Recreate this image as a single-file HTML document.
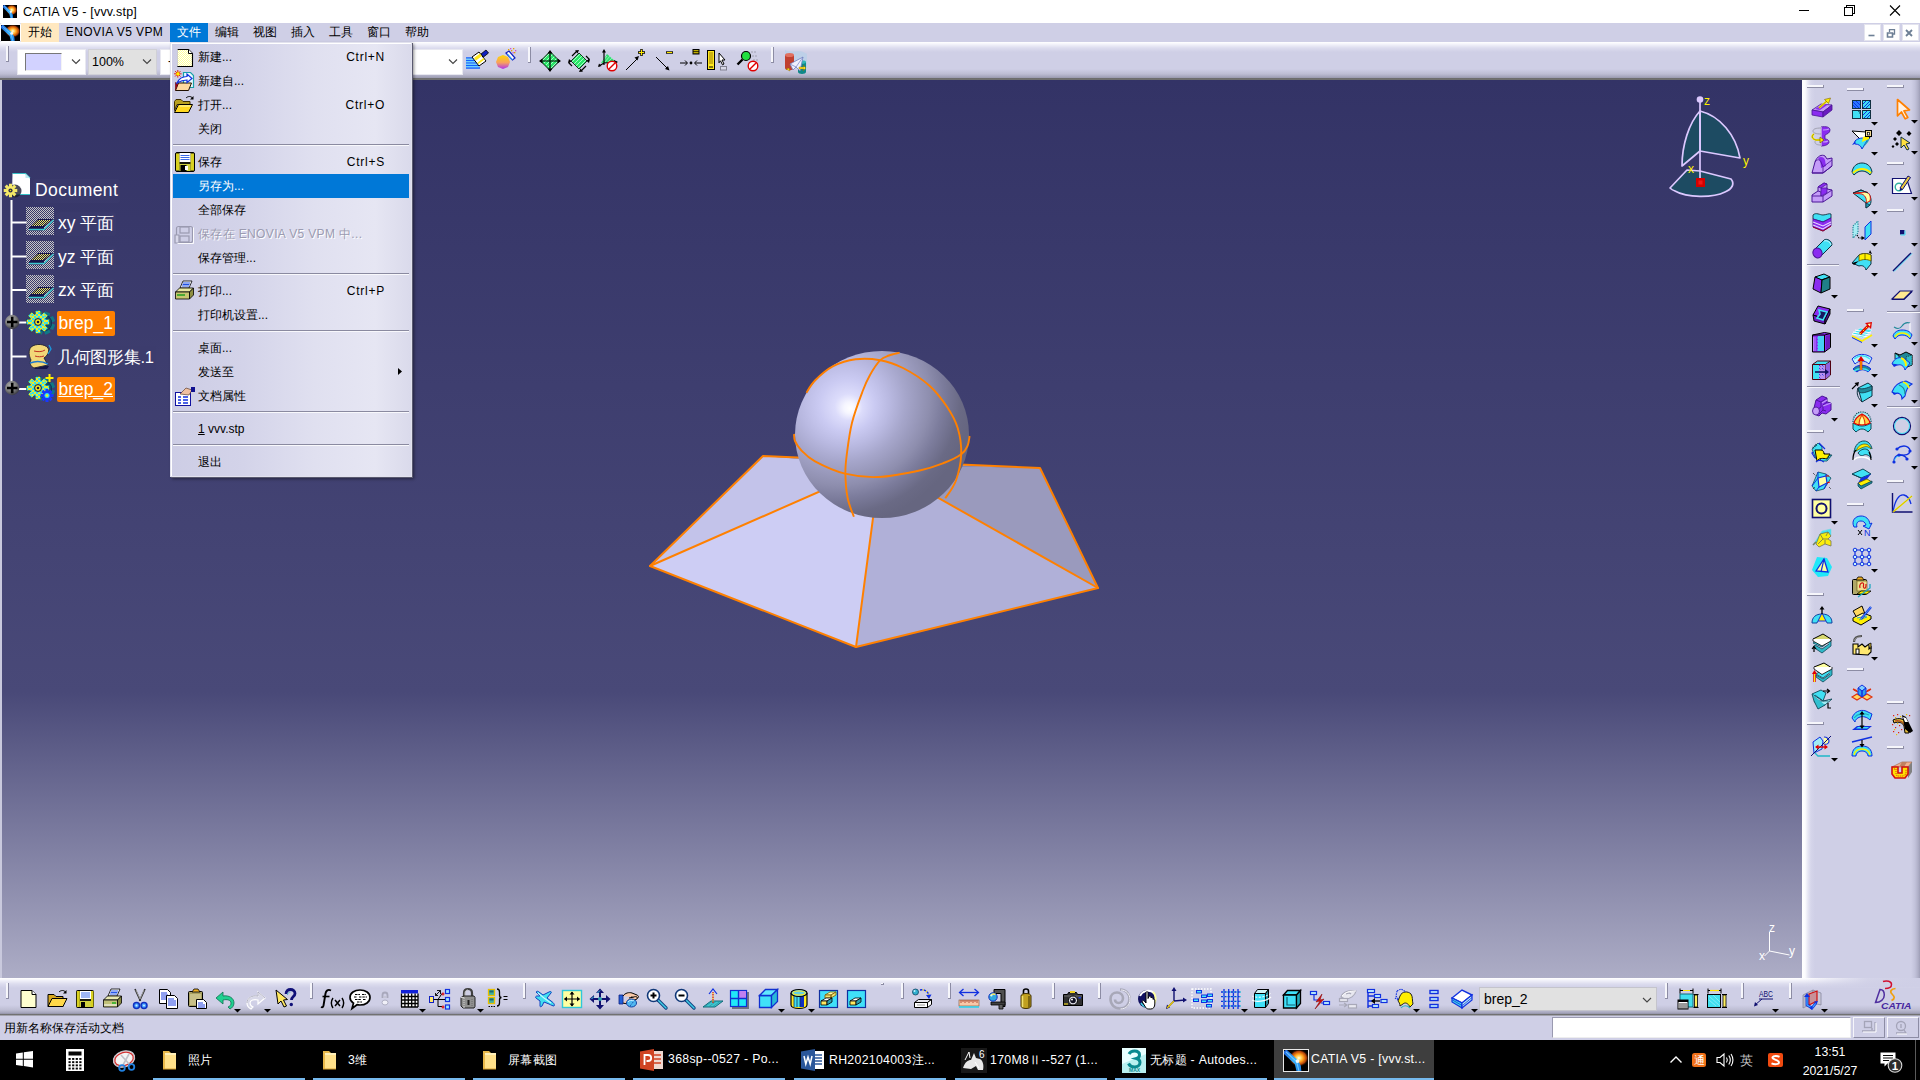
<!DOCTYPE html>
<html lang="zh"><head><meta charset="utf-8"><title>CATIA V5 - [vvv.stp]</title>
<style>
*{box-sizing:border-box;margin:0;padding:0}
html,body{width:1920px;height:1080px;overflow:hidden;background:#fff}
body{font-family:"Liberation Sans",sans-serif;font-size:12px;color:#000;position:relative}
.abs{position:absolute}
#title{left:0;top:0;width:1920px;height:23px;background:#fff}
#title .t{left:23px;top:4.5px;font-size:12.5px;letter-spacing:.2px;white-space:nowrap}
#menubar{left:0;top:23px;width:1920px;height:19px;background:#cfcfe6}
.mi{top:0;height:19px;line-height:19px;font-size:12px;white-space:nowrap;text-align:center}
#tb{left:0;top:42px;width:1920px;height:39px;background:linear-gradient(#fff 0,#f4f4fb 2px,#dcdcee 6px,#cfcfe6 10px,#cfcfe6 27px,#bdbdd3 32px,#a3a3b9 35px,#9a9aae 36px,#6c6c6c 36px,#747474 39px)}
#vp{left:0;top:80px;width:1802px;height:898px;background:linear-gradient(#333366 0,#494978 612px,#adadc6 898px)}
#vpl{left:0;top:80px;width:2px;height:898px;background:#c9c9dd}
#rp{left:1802px;top:80px;width:118px;height:898px;background:linear-gradient(90deg,#fff 0,#fcfcfe 3px,#e6e6f3 6px,#d5d5ea 9px,#cfcfe6 13px,#cfcfe6 109px,#c2c2da 113px,#b0b0c8 116px,#9e9eb6 118px)}
#bb{left:0;top:978px;width:1920px;height:38px;background:linear-gradient(#fff 0,#f4f4fb 2px,#dcdcee 6px,#cfcfe6 10px,#cfcfe6 27px,#bdbdd3 32px,#a3a3b9 35px,#8f8fa3 36px,#6c6c6c 36px,#777 37px,#cfcfe6 38px)}
#sb{left:0;top:1016px;width:1920px;height:24px;background:#cfcfe6}
#sb .t{left:4px;top:3.5px;font-size:12px;white-space:nowrap}
#task{left:0;top:1040px;width:1920px;height:40px;background:#000;color:#fff}
.tk{top:0;height:40px;font-size:12px;white-space:nowrap}
.tk .lb{position:absolute;left:35px;top:12px;font-size:12.3px;letter-spacing:.3px}
.tk .ul{position:absolute;left:0;bottom:0;height:2px;width:100%;background:#76b9ed}
#menu{left:170px;top:42px;width:242px;height:435px;background:linear-gradient(90deg,#cdcde5 0,#d3d3e9 30%,#e0e0f0 60%,#e6e6f3 85%,#dadaeb 100%);border:1px solid #e2e2ee;box-shadow:inset 1px 1px 0 #fff,1px 1px 0 #5a5a70,2px 2px 3px rgba(0,0,0,.45)}
.mn{left:0;width:240px;height:24px;line-height:24px;font-size:12px;white-space:nowrap}
.mn .l{position:absolute;left:27px;top:0}
.mn .k{position:absolute;right:26px;top:0;letter-spacing:.75px}
.mn.sel{background:#0078d7;color:#fff;left:2px;width:236px}
.mn.dis{color:#9b9bb0;text-shadow:1px 1px 0 #fff;letter-spacing:.35px}
.sep{left:2px;width:236px;height:2px;border-top:1px solid #8a8aa0;border-bottom:1px solid #f8f8fc}
.tr{white-space:nowrap;color:#fff;font-size:17.5px;line-height:23px;height:24px;padding:0 2px;border-radius:3px;background:rgba(60,60,110,.55)}
.tr.or{background:#ff8000;border-radius:2px;padding:0 1.5px;height:25px;line-height:25px}
.grip{width:3px;background:#f6f6fb;border-right:1px solid #8c8ca4;border-bottom:1px solid #8c8ca4}
.hgrip{height:3px;background:#f6f6fb;border-right:1px solid #8c8ca4;border-bottom:1px solid #8c8ca4}
.combo{top:7px;height:26px;border:1px solid #e8e8f0}
svg{position:absolute;overflow:visible}
</style></head>
<body>
<div id="title" class="abs">
<svg style="left:3px;top:5px" width="14" height="13" viewBox="0 0 20 18" preserveAspectRatio="none"><defs><radialGradient id="lgb1" cx=".62" cy=".38" r=".42"><stop offset="0" stop-color="#fff"/><stop offset=".18" stop-color="#ffe27a"/><stop offset=".45" stop-color="#ff9a18"/><stop offset=".75" stop-color="#b04008"/><stop offset="1" stop-color="#000" stop-opacity="0"/></radialGradient><linearGradient id="lgs1" x1="0" y1="0" x2="1" y2="1"><stop offset="0" stop-color="#1a5ad8"/><stop offset=".55" stop-color="#38b4ff"/><stop offset="1" stop-color="#1a78e0"/></linearGradient><filter id="lgf1" x="-10%" y="-10%" width="120%" height="120%"><feGaussianBlur stdDeviation=".55"/></filter><clipPath id="lgc1"><rect width="20" height="18"/></clipPath></defs><rect width="20" height="18" fill="#000"/><g clip-path="url(#lgc1)"><g filter="url(#lgf1)"><rect width="20" height="18" fill="url(#lgb1)"/><path d="M0 1l2-1.500 9.500 9 2.500 5 .5 5h-4l-1.500-6.500-9-8.500z" fill="url(#lgs1)"/><path d="M1.500 1.500l9 8.500 2 8" stroke="#7fd4ff" stroke-width=".9" fill="none" opacity=".8"/><circle cx="11.300" cy="9.500" r="1.600" fill="#fff" opacity=".9"/></g></g></svg>
<div class="abs t">CATIA V5 - [vvv.stp]</div>
<svg style="left:1790px;top:0" width="130" height="23" viewBox="0 0 130 23"><g stroke="#000" stroke-width="1" fill="none"><path d="M9 10.5h10" shape-rendering="crispEdges"/><path d="M54.5 7.5h8v8h-8z" shape-rendering="crispEdges"/><path d="M56.5 7.500v-2h8v8h-2" shape-rendering="crispEdges"/><path d="M100 5.5l10 10M110 5.5l-10 10" stroke-width="1.1"/></g></svg>
</div>
<div id="menubar" class="abs">
<div class="abs" style="left:0;top:0;width:21px;height:19px;background:#fff;border-radius:2px"></div>
<svg style="left:1px;top:2px" width="19" height="16" viewBox="0 0 20 18" preserveAspectRatio="none"><defs><radialGradient id="lgb2" cx=".62" cy=".38" r=".42"><stop offset="0" stop-color="#fff"/><stop offset=".18" stop-color="#ffe27a"/><stop offset=".45" stop-color="#ff9a18"/><stop offset=".75" stop-color="#b04008"/><stop offset="1" stop-color="#000" stop-opacity="0"/></radialGradient><linearGradient id="lgs2" x1="0" y1="0" x2="1" y2="1"><stop offset="0" stop-color="#1a5ad8"/><stop offset=".55" stop-color="#38b4ff"/><stop offset="1" stop-color="#1a78e0"/></linearGradient><filter id="lgf2" x="-10%" y="-10%" width="120%" height="120%"><feGaussianBlur stdDeviation=".55"/></filter><clipPath id="lgc2"><rect width="20" height="18"/></clipPath></defs><rect width="20" height="18" fill="#000"/><g clip-path="url(#lgc2)"><g filter="url(#lgf2)"><rect width="20" height="18" fill="url(#lgb2)"/><path d="M0 1l2-1.500 9.500 9 2.500 5 .5 5h-4l-1.500-6.500-9-8.500z" fill="url(#lgs2)"/><path d="M1.500 1.500l9 8.500 2 8" stroke="#7fd4ff" stroke-width=".9" fill="none" opacity=".8"/><circle cx="11.300" cy="9.500" r="1.600" fill="#fff" opacity=".9"/></g></g></svg>
<div class="abs mi" style="left:21px;width:38px;background:#ffe8c0">开始</div>
<div class="abs mi" style="left:63px;width:103px;letter-spacing:.42px">ENOVIA V5 VPM</div>
<div class="abs mi" style="left:170px;width:38px;background:#0078d7;color:#fff">文件</div>
<div class="abs mi" style="left:208px;width:38px;">编辑</div>
<div class="abs mi" style="left:246px;width:38px;">视图</div>
<div class="abs mi" style="left:284px;width:38px;">插入</div>
<div class="abs mi" style="left:322px;width:38px;">工具</div>
<div class="abs mi" style="left:360px;width:38px;">窗口</div>
<div class="abs mi" style="left:398px;width:38px;">帮助</div>
<div class="abs" style="left:1864px;top:1px;width:17px;height:17px;background:#fff;border:1px solid #e4e4ee"></div>
<div class="abs" style="left:1883px;top:1px;width:17px;height:17px;background:#fff;border:1px solid #e4e4ee"></div>
<div class="abs" style="left:1902px;top:1px;width:17px;height:17px;background:#fff;border:1px solid #e4e4ee"></div>
<svg style="left:1864px;top:1px" width="57" height="17" viewBox="0 0 57 17"><g fill="none" stroke="#6d7f95" stroke-width="1.6"><path d="M4.5 11.5h6"/><path d="M23.5 9h5v4h-5z"/><path d="M25.5 8v-2.3h5v4.3h-1.5" stroke-width="1.3"/><path d="M42 6l6 6M48 6l-6 6" stroke-width="1.8"/></g></svg>
</div>
<div id="tb" class="abs">
<div class="abs grip" style="left:6px;top:4px;height:16px"></div>
<div class="abs combo" style="left:17px;width:69px;background:#fff"><div class="abs" style="left:7px;top:3px;width:37px;height:18px;background:#d2d2ff;border-top:1px solid #777;border-left:1px solid #777;border-right:1px solid #f4f4f4;border-bottom:1px solid #f4f4f4"></div></div>
<div class="abs combo" style="left:88px;width:69px;background:#e1e1e1;border-color:#d0d0d6"><div class="abs" style="left:3px;top:5px;font-size:12.5px">100%</div></div>
<div class="abs combo" style="left:160px;width:303px;background:#fff"><div class="abs" style="left:7px;top:4px">-</div></div>
<svg style="left:0;top:0" width="480" height="38" viewBox="0 0 480 38"><g fill="none" stroke="#444" stroke-width="1.1"><path d="M72 17.5l4 4 4-4"/><path d="M143 17.5l4 4 4-4"/><path d="M449 17.5l4 4 4-4"/></g></svg>
<div class="abs grip" style="left:528px;top:5px;height:16px"></div>
<div class="abs grip" style="left:771px;top:5px;height:16px"></div>
<svg style="left:465px;top:7px" width="24" height="24" viewBox="0 0 24 24"><path d="M1 9h10M1 11.500h11M1 14h12M1 16.500h13M1 19h14" stroke="#1060ff" stroke-width="1.300"/><path d="M1 10.200h10M1 12.700h11M1 15.200h12M1 17.700h13" stroke="#60d8ff" stroke-width="1"/><path d="M7 8l7-5 7 9-7 5z" fill="#fff" stroke="#000" stroke-width="1"/><path d="M9 9l6-4.500 2 2.500-6 4.500zM12.500 13.500l6-4.500 1 1.500-6 4.500z" fill="#ffe820"/><path d="M16 5l5-4 2.500 3-5 4z" fill="#1020c0" stroke="#000" stroke-width=".8"/></svg><svg style="left:493px;top:7px" width="24" height="24" viewBox="0 0 24 24"><defs><linearGradient id="psg" x1="0" y1="0" x2="0" y2="1"><stop offset="0" stop-color="#ffd800"/><stop offset=".55" stop-color="#f8a060"/><stop offset="1" stop-color="#b030f0"/></linearGradient></defs><path d="M5 8l5-2 5 2 2 5-2 5-5 2-5-2-2-5z" fill="url(#psg)"/><path d="M13 4l3-2 6 7-2.500 2z" fill="#fff" stroke="#1020c0" stroke-width="1.200"/><path d="M14.500 5l5 6" stroke="#30b0ff" stroke-width="1"/><g fill="#e8a000"><rect x="15" y="0" width="1.300" height="1.300"/><rect x="18" y="1" width="1.300" height="1.300"/><rect x="20" y="-1" width="1.300" height="1.300"/><rect x="21" y="3" width="1.300" height="1.300"/></g><g fill="#d050d0"><rect x="17" y="-1" width="1.300" height="1.300"/><rect x="19.500" y="3" width="1.300" height="1.300"/><rect x="22" y="1" width="1.300" height="1.300"/></g></svg><svg style="left:538px;top:7px" width="24" height="24" viewBox="0 0 24 24"><path d="M12 2.500l9.500 9.500-9.500 9.500-9.500-9.500z" fill="#28e868"/><path d="M5 9l3-3M4 12l8-8M6 14l10-10M8 16l10-10M10 18l9-9M12 20l8-8" stroke="#b0fcd0" stroke-width=".9"/><path d="M12 2.500l9.500 9.500-9.500 9.500-9.500-9.500z" fill="none" stroke="#000" stroke-width=".9"/><path d="M12 3v18M3 12h18" stroke="#000" stroke-width="1.200"/><path d="M12 1l-2.500 3.500h5zM12 23l-2.500-3.500h5zM1 12l3.500-2.500v5zM23 12l-3.500-2.500v5z" fill="#000"/></svg><svg style="left:567px;top:7px" width="24" height="24" viewBox="0 0 24 24"><path d="M12 4l8 8-8 8-8-8z" fill="#28e868"/><path d="M6 10l4-4M5 13l8-8M7 15l9-9M9 17l9-9M11 19l8-8" stroke="#b0fcd0" stroke-width=".9"/><path d="M12 4l8 8-8 8-8-8z" fill="none" stroke="#000" stroke-width=".8"/><path d="M5 7l5-5M19 7l3 3-1 3M19 17l-5 5M5 17l-3-3 1-3" stroke="#000" stroke-width="1.200" fill="none"/><path d="M12 1l-4 .5 2.500 3zM22 14l1-4-3.500 1.500zM12 23l4-.5-2.500-3zM2 10l-1 4 3.500-1.500z" fill="#000"/></svg><svg style="left:596px;top:7px" width="24" height="24" viewBox="0 0 24 24"><path d="M5 14l6-9 9 8z" fill="#30e070"/><path d="M7 12l4-5M8 14l6-7M11 14l5-5" stroke="#a0f8c0" stroke-width=".8"/><path d="M8 2v14M3 17l5-3 13-1" stroke="#000" stroke-width="1.200" fill="none"/><path d="M8 0l-2 3.500h4zM22 13l-4-2v4zM2 18l1-3.500 2.500 2.500z" fill="#000"/><circle cx="16" cy="17" r="4.800" fill="#fff" stroke="#e00000" stroke-width="1.400"/><path d="M12.700 20.300l6.600-6.600" stroke="#e00000" stroke-width="1.400"/></svg><svg style="left:624px;top:7px" width="24" height="24" viewBox="0 0 24 24"><path d="M2 21l12-12" stroke="#000" stroke-width="1"/><path d="M15 7l-4.500 1.500 3 3z" fill="#000"/><path d="M14 3.500h7M17.500 0v7" stroke="#000" stroke-width="2.400"/><path d="M14.800 3.500h5.400M17.500 .8v5.400" stroke="#ffe800" stroke-width="1.100"/></svg><svg style="left:652px;top:7px" width="24" height="24" viewBox="0 0 24 24"><path d="M4 8l12 12" stroke="#000" stroke-width="1"/><path d="M17.500 21.500l-1.500-4.500-3 3z" fill="#000"/><path d="M14 3.500h7" stroke="#000" stroke-width="2.400"/><path d="M14.800 3.500h5.400" stroke="#ffe800" stroke-width="1.100"/></svg><svg style="left:679px;top:7px" width="24" height="24" viewBox="0 0 24 24"><path d="M1 14h7M23 14h-7" stroke="#000" stroke-width="1"/><path d="M6 11.500l2.500 2.500-2.500 2.500M18 11.500l-2.500 2.500 2.500 2.500" stroke="#000" stroke-width="1" fill="none"/><circle cx="12" cy="14" r="1.400" fill="#000"/><rect x="13.500" y="0" width="7" height="5.500" fill="#000"/><path d="M14.500 1.700h5M14.500 3.800h5" stroke="#ffe800" stroke-width="1.100"/></svg><svg style="left:706px;top:7px" width="24" height="24" viewBox="0 0 24 24"><rect x="1.500" y="1.500" width="7" height="19" fill="#ffe820" stroke="#000" stroke-width="1"/><path d="M3 4h4M3 6h4M3 8h4M3 10h4M3 12h4M3 14h4" stroke="#806000" stroke-width=".8"/><path d="M3 18h4" stroke="#000" stroke-width="1"/><path d="M13 4l6 7-3 0 2 4-1.500 .8-2-4-1.500 2z" fill="#fff" stroke="#000" stroke-width="1"/><rect x="14.500" y="17.500" width="6" height="3.500" fill="#d8d8e8" stroke="#808090" stroke-width="1"/></svg><svg style="left:736px;top:7px" width="24" height="24" viewBox="0 0 24 24"><circle cx="10" cy="7" r="4.500" fill="#20e040" stroke="#000" stroke-width="1.200"/><path d="M6.500 10.500l-5 5" stroke="#000" stroke-width="2.400"/><path d="M15 3h6M16 7h6M17 11h5" stroke="#a0a0b0" stroke-width="1" stroke-dasharray="2 1"/><circle cx="17" cy="17" r="4.800" fill="#fff" stroke="#e00000" stroke-width="1.400"/><path d="M13.700 20.300l6.600-6.600" stroke="#e00000" stroke-width="1.400"/></svg><svg style="left:783px;top:7px" width="24" height="24" viewBox="0 0 24 24"><path d="M2 1c8 4 14-2 22 4v14l-22-3z" fill="#b8d0e8" opacity=".8"/><path d="M2 6v13c0 3 9 3 9 0v-13" fill="#c04030"/><ellipse cx="6.500" cy="6" rx="4.500" ry="2" fill="#e07060"/><path d="M15 13v10c0 2.500 8 2.500 8 0v-10" fill="#108888"/><ellipse cx="19" cy="13" rx="4" ry="1.800" fill="#30b8b8"/><path d="M7 15l13-7-3 14-4-4-3 3z" fill="#f0f0ff" stroke="#7080c0" stroke-width=".8"/><path d="M7 15l6 3 7-10" stroke="#7080c0" stroke-width=".7" fill="none"/><path d="M3 20l4 2-1-3zM16 18h5l-1-2 3 3-3 3 1-2h-5z" fill="#ffe020" stroke="#806000" stroke-width=".4"/></svg>
</div>
<div id="vp" class="abs"></div>
<div id="vpl" class="abs"></div>
<svg style="left:0px;top:0px" width="1920" height="1080" viewBox="0 0 1920 1080"><defs><radialGradient id="sph" cx="0.22" cy="0.25" r="0.8" fx="0.318" fy="0.345"><stop offset="0" stop-color="#ffffff"/><stop offset="0.04" stop-color="#f6f6ff"/><stop offset="0.1" stop-color="#dcdcfb"/><stop offset="0.2" stop-color="#cacaf2"/><stop offset="0.32" stop-color="#b9b9e1"/><stop offset="0.45" stop-color="#a6a6cb"/><stop offset="0.65" stop-color="#8e8eae"/><stop offset="0.76" stop-color="#7c7c9c"/><stop offset="0.9" stop-color="#6a6a85"/><stop offset="1" stop-color="#666680"/></radialGradient></defs><polygon points="763,456 1040,468 880,465" fill="#a9a9cf"/><polygon points="650,566 763,456 880,465" fill="#c3c3ea"/><polygon points="1098,588 1040,468 880,465" fill="#9a9abd"/><polygon points="650,566 856,647 880,465" fill="#cdcdf4"/><polygon points="856,647 1098,588 880,465" fill="#b0b0d8"/><g stroke="#ff8000" stroke-width="2" fill="none" stroke-linecap="round" stroke-linejoin="round"><polygon points="650,566 856,647 1098,588 1040,468 763,456"/><path d="M650 566L880 465M856 647L880 465M1098 588L880 465"/></g><ellipse cx="882" cy="434.500" rx="87" ry="83.500" fill="url(#sph)"/><g stroke="#ff8000" stroke-width="1.900" fill="none"><path d="M794.0 434.0C794.2 435.2 793.8 438.3 795.0 441.0C796.2 443.7 797.7 446.6 801.0 450.0C804.3 453.4 807.7 457.4 815.0 461.4C822.3 465.3 834.4 471.1 845.0 473.7C855.6 476.3 865.9 477.6 878.5 477.0C891.1 476.4 909.6 472.6 920.7 470.2C931.8 467.8 938.2 465.1 945.0 462.5C951.8 459.9 957.5 457.1 961.2 454.3C965.0 451.6 966.1 449.1 967.5 446.0C968.9 442.9 969.2 437.7 969.6 436.0"/><path d="M899.6 352.7C897.8 353.2 892.2 354.2 889.0 355.5C885.8 356.8 883.5 356.9 880.3 360.2C877.1 363.4 872.9 369.9 870.0 375.0C867.1 380.1 865.7 383.1 862.7 391.0C859.7 398.9 854.6 412.1 852.0 422.7C849.4 433.2 847.9 445.8 846.8 454.3C845.7 462.8 845.2 466.4 845.4 473.7C845.5 481.0 846.3 491.1 847.7 498.3C849.1 505.5 852.9 513.7 853.9 516.8"/><path d="M806.4 392.8C807.8 390.8 810.6 384.9 815.0 380.5C819.4 376.1 826.0 369.9 832.8 366.4C839.6 362.9 847.7 360.3 855.6 359.3C863.5 358.3 872.4 358.8 880.3 360.2C888.2 361.6 894.8 363.8 903.0 368.0C911.2 372.2 922.2 379.2 929.5 385.7C936.8 392.2 942.3 399.8 947.0 406.8C951.7 413.9 955.3 420.1 957.7 428.0C960.1 435.9 961.5 445.5 961.2 454.3C960.9 463.1 958.5 473.4 955.9 480.7C953.2 488.0 947.1 495.4 945.3 498.3"/></g></svg>
<svg style="left:0px;top:0px" width="1920" height="1080" viewBox="0 0 1920 1080"><g stroke="#dcc8ff" stroke-width="1.7" fill="#1d4b62" stroke-linejoin="round"><path d="M1700 111c20 5 36 24 40 47l-40-7z"/><path d="M1700 111c-11 12-18 34-18 55l18-15z"/><path d="M1687 170l13 1 31 8c4 5 1 10-6 13-12 6-38 6-50-1-3-1-4-2-5-3z"/><path d="M1700 100v82" fill="none"/></g><circle cx="1700" cy="99.5" r="3.3" fill="#dcc8ff"/><rect x="1696" y="178" width="9" height="9" fill="#d40000"/><rect x="1698.500" y="180.500" width="4" height="4" fill="#f01818"/><g fill="#ffee00" font-size="12" font-family="Liberation Sans,sans-serif"><text x="1704" y="105">z</text><text x="1743" y="165">y</text><text x="1688" y="173">x</text></g></svg>
<svg style="left:0px;top:0px" width="1920" height="1080" viewBox="0 0 1920 1080"><g stroke="#fff" stroke-width="1" fill="none"><path d="M1769.500 951v-19M1769.500 951l20 4M1769.500 951l-5 5"/></g><g fill="#fff" font-size="12" font-family="Liberation Sans,sans-serif"><text x="1769" y="932">z</text><text x="1789" y="955">y</text><text x="1759" y="960">x</text></g></svg>
<svg style="left:0px;top:0px" width="240" height="420" viewBox="0 0 240 420"><defs><pattern id="chk" width="2" height="2" patternUnits="userSpaceOnUse"><rect width="1" height="1" fill="#c6c6c6"/><rect x="1" y="1" width="1" height="1" fill="#c6c6c6"/></pattern><radialGradient id="nodeg" cx=".4" cy=".35" r=".65"><stop offset="0" stop-color="#b0b0b0"/><stop offset=".6" stop-color="#7c7c7c"/><stop offset="1" stop-color="#3c3c44"/></radialGradient><pattern id="gchk" width="4" height="4" patternUnits="userSpaceOnUse"><rect width="4" height="4" fill="#30e0f0"/><rect width="2" height="2" fill="#f4ec20"/><rect x="2" y="2" width="2" height="2" fill="#f4ec20"/></pattern><pattern id="ychk" width="2" height="2" patternUnits="userSpaceOnUse"><rect width="2" height="2" fill="#15154a"/><rect width="1" height="1" fill="#f8f060"/><rect x="1" y="1" width="1" height="1" fill="#f8f060"/></pattern></defs><g stroke="#fff" stroke-width="2" fill="none"><path d="M11.500 200v189M11.500 222.500h15M11.500 256.500h15M11.500 290h15M19 322.500h9M11.500 356.500h15M19 389h9"/></g><path d="M12.500 173.500h13l4.500 4.500v16h-18z" fill="#fff"/><path d="M12.500 173.500h13l4.500 4.500M12 194.500h18" fill="none" stroke="#38c0c8" stroke-width="1.200"/><path d="M25.500 173.500v4.500h4.500z" fill="#bfeaf0"/><circle cx="15" cy="191" r="6.500" fill="#1c1c30" opacity=".8"/><g transform="translate(10.500,190.500) scale(.52)"><rect x="-3" y="-13" width="6" height="7" fill="#f4e868" transform="rotate(0)"/><rect x="-3" y="-13" width="6" height="7" fill="#f4e868" transform="rotate(45)"/><rect x="-3" y="-13" width="6" height="7" fill="#f4e868" transform="rotate(90)"/><rect x="-3" y="-13" width="6" height="7" fill="#f4e868" transform="rotate(135)"/><rect x="-3" y="-13" width="6" height="7" fill="#f4e868" transform="rotate(180)"/><rect x="-3" y="-13" width="6" height="7" fill="#f4e868" transform="rotate(225)"/><rect x="-3" y="-13" width="6" height="7" fill="#f4e868" transform="rotate(270)"/><rect x="-3" y="-13" width="6" height="7" fill="#f4e868" transform="rotate(315)"/><circle r="8" fill="#f4e868"/><circle r="4" fill="#2a2a48"/><circle r="1.500" fill="#e8d820"/></g><g transform="translate(26,207)"><rect width="28" height="28" fill="url(#chk)"/><path d="M4 20l8-8h15.500l-9.500 8z" fill="#15154a"/><path d="M5.500 19l6.500-6h13l-7.500 6z" fill="url(#ychk)"/><path d="M3 20h15v2.500h-15z" fill="#15154a"/><path d="M3 22.500h15l9.500-9.500" stroke="#3cc8d0" stroke-width="1.300" fill="none"/><path d="M3 24h14" stroke="#15154a" stroke-width="1" stroke-dasharray="1 1"/></g><g transform="translate(26,241)"><rect width="28" height="28" fill="url(#chk)"/><path d="M4 20l8-8h15.500l-9.500 8z" fill="#15154a"/><path d="M5.500 19l6.500-6h13l-7.500 6z" fill="url(#ychk)"/><path d="M3 20h15v2.500h-15z" fill="#15154a"/><path d="M3 22.500h15l9.500-9.500" stroke="#3cc8d0" stroke-width="1.300" fill="none"/><path d="M3 24h14" stroke="#15154a" stroke-width="1" stroke-dasharray="1 1"/></g><g transform="translate(26,275)"><rect width="28" height="28" fill="url(#chk)"/><path d="M4 20l8-8h15.500l-9.500 8z" fill="#15154a"/><path d="M5.500 19l6.500-6h13l-7.500 6z" fill="url(#ychk)"/><path d="M3 20h15v2.500h-15z" fill="#15154a"/><path d="M3 22.500h15l9.500-9.500" stroke="#3cc8d0" stroke-width="1.300" fill="none"/><path d="M3 24h14" stroke="#15154a" stroke-width="1" stroke-dasharray="1 1"/></g><g transform="translate(38,322)"><g transform="translate(5.500,1)"><rect x="-2.800" y="-11.500" width="5.600" height="6" fill="#0f7886" transform="rotate(22)"/><rect x="-2.800" y="-11.500" width="5.600" height="6" fill="#0f7886" transform="rotate(67)"/><rect x="-2.800" y="-11.500" width="5.600" height="6" fill="#0f7886" transform="rotate(112)"/><rect x="-2.800" y="-11.500" width="5.600" height="6" fill="#0f7886" transform="rotate(157)"/><rect x="-2.800" y="-11.500" width="5.600" height="6" fill="#0f7886" transform="rotate(202)"/><rect x="-2.800" y="-11.500" width="5.600" height="6" fill="#0f7886" transform="rotate(247)"/><rect x="-2.800" y="-11.500" width="5.600" height="6" fill="#0f7886" transform="rotate(292)"/><rect x="-2.800" y="-11.500" width="5.600" height="6" fill="#0f7886" transform="rotate(337)"/><circle r="8.500" fill="#15154a"/><circle r="8" fill="#0f7886" opacity=".55"/></g><rect x="-2.800" y="-11.500" width="5.600" height="6.500" fill="url(#gchk)" stroke="#0a3a48" stroke-width=".5" transform="rotate(0)"/><rect x="-2.800" y="-11.500" width="5.600" height="6.500" fill="url(#gchk)" stroke="#0a3a48" stroke-width=".5" transform="rotate(45)"/><rect x="-2.800" y="-11.500" width="5.600" height="6.500" fill="url(#gchk)" stroke="#0a3a48" stroke-width=".5" transform="rotate(90)"/><rect x="-2.800" y="-11.500" width="5.600" height="6.500" fill="url(#gchk)" stroke="#0a3a48" stroke-width=".5" transform="rotate(135)"/><rect x="-2.800" y="-11.500" width="5.600" height="6.500" fill="url(#gchk)" stroke="#0a3a48" stroke-width=".5" transform="rotate(180)"/><rect x="-2.800" y="-11.500" width="5.600" height="6.500" fill="url(#gchk)" stroke="#0a3a48" stroke-width=".5" transform="rotate(225)"/><rect x="-2.800" y="-11.500" width="5.600" height="6.500" fill="url(#gchk)" stroke="#0a3a48" stroke-width=".5" transform="rotate(270)"/><rect x="-2.800" y="-11.500" width="5.600" height="6.500" fill="url(#gchk)" stroke="#0a3a48" stroke-width=".5" transform="rotate(315)"/><circle r="8" fill="url(#gchk)"/><circle r="4.600" fill="#28c8d8"/><circle r="3.400" fill="#f4ec20" stroke="#15154a" stroke-width="1"/><circle r="1.300" fill="#15154a"/></g><g transform="translate(38,388)"><g transform="translate(5.500,1)"><rect x="-2.800" y="-11.500" width="5.600" height="6" fill="#0f7886" transform="rotate(22)"/><rect x="-2.800" y="-11.500" width="5.600" height="6" fill="#0f7886" transform="rotate(67)"/><rect x="-2.800" y="-11.500" width="5.600" height="6" fill="#0f7886" transform="rotate(112)"/><rect x="-2.800" y="-11.500" width="5.600" height="6" fill="#0f7886" transform="rotate(157)"/><rect x="-2.800" y="-11.500" width="5.600" height="6" fill="#0f7886" transform="rotate(202)"/><rect x="-2.800" y="-11.500" width="5.600" height="6" fill="#0f7886" transform="rotate(247)"/><rect x="-2.800" y="-11.500" width="5.600" height="6" fill="#0f7886" transform="rotate(292)"/><rect x="-2.800" y="-11.500" width="5.600" height="6" fill="#0f7886" transform="rotate(337)"/><circle r="8.500" fill="#15154a"/><circle r="8" fill="#0f7886" opacity=".55"/></g><rect x="-2.800" y="-11.500" width="5.600" height="6.500" fill="url(#gchk)" stroke="#0a3a48" stroke-width=".5" transform="rotate(0)"/><rect x="-2.800" y="-11.500" width="5.600" height="6.500" fill="url(#gchk)" stroke="#0a3a48" stroke-width=".5" transform="rotate(45)"/><rect x="-2.800" y="-11.500" width="5.600" height="6.500" fill="url(#gchk)" stroke="#0a3a48" stroke-width=".5" transform="rotate(90)"/><rect x="-2.800" y="-11.500" width="5.600" height="6.500" fill="url(#gchk)" stroke="#0a3a48" stroke-width=".5" transform="rotate(135)"/><rect x="-2.800" y="-11.500" width="5.600" height="6.500" fill="url(#gchk)" stroke="#0a3a48" stroke-width=".5" transform="rotate(180)"/><rect x="-2.800" y="-11.500" width="5.600" height="6.500" fill="url(#gchk)" stroke="#0a3a48" stroke-width=".5" transform="rotate(225)"/><rect x="-2.800" y="-11.500" width="5.600" height="6.500" fill="url(#gchk)" stroke="#0a3a48" stroke-width=".5" transform="rotate(270)"/><rect x="-2.800" y="-11.500" width="5.600" height="6.500" fill="url(#gchk)" stroke="#0a3a48" stroke-width=".5" transform="rotate(315)"/><circle r="8" fill="url(#gchk)"/><circle r="4.600" fill="#28c8d8"/><circle r="3.400" fill="#f4ec20" stroke="#15154a" stroke-width="1"/><circle r="1.300" fill="#15154a"/><path d="M7.500-10h8M11.500-14v8" stroke="#fff000" stroke-width="2"/><g transform="translate(9,7.500) scale(.5)"><rect x="-3" y="-13" width="6" height="7" fill="#1838ff" transform="rotate(0)"/><rect x="-3" y="-13" width="6" height="7" fill="#1838ff" transform="rotate(45)"/><rect x="-3" y="-13" width="6" height="7" fill="#1838ff" transform="rotate(90)"/><rect x="-3" y="-13" width="6" height="7" fill="#1838ff" transform="rotate(135)"/><rect x="-3" y="-13" width="6" height="7" fill="#1838ff" transform="rotate(180)"/><rect x="-3" y="-13" width="6" height="7" fill="#1838ff" transform="rotate(225)"/><rect x="-3" y="-13" width="6" height="7" fill="#1838ff" transform="rotate(270)"/><rect x="-3" y="-13" width="6" height="7" fill="#1838ff" transform="rotate(315)"/><circle r="8.500" fill="#1838ff"/><circle r="5" fill="#30e0f0"/><circle r="2.600" fill="#f4ec20"/></g></g><g transform="translate(27,343)"><path d="M5 22l3 4h12l2-3z" fill="#15154a"/><path d="M4 4c5-4 14-3 17 1 2 4-1 8-4 10l4 7-14 3c-3-1-5-5-3-8-2-4-3-9 0-13z" fill="#f2d878" stroke="#2a2a3a" stroke-width="1"/><path d="M7 8c4 1 8 1 11-1M8 13c3 1 6 1 9 0" stroke="#c03020" stroke-width="1" fill="none"/><path d="M3 20c5-2 12-2 18 1" stroke="#1a78d0" stroke-width="1.600" fill="none"/><path d="M22 2l2 4-3 5" stroke="#1a9ae0" stroke-width="1.300" fill="none"/></g><circle cx="12.200" cy="322" r="7.200" fill="url(#nodeg)"/><path d="M7 322h10.500M12.200 316.8v10.500" stroke="#000" stroke-width="2.600"/><circle cx="12.200" cy="388" r="7.200" fill="url(#nodeg)"/><path d="M7 388h10.500M12.200 382.8v10.500" stroke="#000" stroke-width="2.600"/></svg><div class="abs tr " style="left:33px;top:179px"><span style="letter-spacing:.45px">Document</span></div><div class="abs tr " style="left:56px;top:212px">xy <span style="font-size:16.500px">平面</span></div><div class="abs tr " style="left:56px;top:246px">yz <span style="font-size:16.500px">平面</span></div><div class="abs tr " style="left:56px;top:279px">zx <span style="font-size:16.500px">平面</span></div><div class="abs tr or" style="left:57px;top:311px">brep_1</div><div class="abs tr " style="left:55px;top:345.5px"><span style="font-size:16.500px;letter-spacing:-.3px">几何图形集.1</span></div><div class="abs tr or" style="left:57px;top:377px"><u>brep_2</u></div>
<div id="rp" class="abs">
<div class="abs hgrip" style="left:5px;top:5px;width:17px"></div><div class="abs hgrip" style="left:45px;top:8px;width:17px"></div><div class="abs hgrip" style="left:85px;top:5px;width:17px"></div><div class="abs hgrip" style="left:85px;top:82px;width:17px"></div><div class="abs hgrip" style="left:85px;top:129px;width:17px"></div><div class="abs hgrip" style="left:45px;top:229px;width:17px"></div><div class="abs hgrip" style="left:5px;top:350px;width:17px"></div><div class="abs hgrip" style="left:85px;top:400px;width:17px"></div><div class="abs hgrip" style="left:45px;top:423px;width:17px"></div><div class="abs hgrip" style="left:5px;top:513px;width:17px"></div><div class="abs hgrip" style="left:45px;top:588px;width:17px"></div><div class="abs hgrip" style="left:85px;top:621px;width:17px"></div><div class="abs hgrip" style="left:5px;top:642px;width:17px"></div><div class="abs hgrip" style="left:85px;top:666px;width:17px"></div><div class="abs" style="left:5px;top:184px;width:32px;height:2px;border-top:1px solid #9090a8;border-bottom:1px solid #f6f6fb"></div><div class="abs" style="left:5px;top:306px;width:33px;height:2px;border-top:1px solid #9090a8;border-bottom:1px solid #f6f6fb"></div><div class="abs" style="left:85px;top:231px;width:33px;height:2px;border-top:1px solid #9090a8;border-bottom:1px solid #f6f6fb"></div><div class="abs" style="left:85px;top:326px;width:33px;height:2px;border-top:1px solid #9090a8;border-bottom:1px solid #f6f6fb"></div><svg style="left:8px;top:16px" width="24" height="24" viewBox="0 0 24 24"><path d="M2 14l9-6 11 1-9 7z" fill="#c49cf8" stroke="#4a1496" stroke-width=".8"/><path d="M2 14v5l11 2v-5z" fill="#8a2cf0" stroke="#4a1496" stroke-width=".8"/><path d="M13 16v5l9-7v-5z" fill="#6a1cc0" stroke="#4a1496" stroke-width=".8"/><path d="M5 13l8-5 5 .5-8 5.500z" fill="#8a2cf0"/><path d="M9 12l9-8" stroke="#fff000" stroke-width="2"/><path d="M9 12l9-8" stroke="#806000" stroke-width=".6"/><path d="M20.500 2l-6 1.500 4 4z" fill="#fff000" stroke="#806000" stroke-width=".6"/></svg><svg style="left:8px;top:45px" width="24" height="24" viewBox="0 0 24 24"><path d="M11 2c5-1 9 0 9 3s-3 4-5 5v4c2 0 4 1 4 3s-3 4-8 4z" fill="#8a2cf0" stroke="#4a1496" stroke-width=".8"/><path d="M11 2v19" stroke="#fff" stroke-width="1"/><path d="M11 3c-5 0-8 1-8 3s3 3 8 3M11 14c-4 0-6 1-6 3s2 3 6 3" stroke="#a0a0b0" stroke-width="1" fill="none"/><path d="M4 9c-3 2-2 5 2 6h6" stroke="#fff000" stroke-width="1.800" fill="none"/><path d="M4 9c-3 2-2 5 2 6h6" stroke="#605000" stroke-width=".5" fill="none"/><path d="M14 15l-4-3v6z" fill="#fff000" stroke="#605000" stroke-width=".6"/><path d="M13 5c2 0 4 0 6-1M13 17c2 0 4 0 5-1" stroke="#c49cf8" stroke-width="1.200" fill="none"/></svg><svg style="left:8px;top:72px" width="24" height="24" viewBox="0 0 24 24"><path d="M2 21l3-11c2-6 7-8 10-6l2 3 5-1v8l-9 7z" fill="#c49cf8" stroke="#4a1496" stroke-width="1"/><path d="M2 21h11l9-7" fill="none" stroke="#4a1496" stroke-width="1"/><path d="M8 6c3-2 6-1 7 2l1 6-5 2c0-4-1-8-3-10z" fill="#8a2cf0"/><path d="M13 21v-6l9-7" stroke="#4a1496" stroke-width=".8" fill="none"/><path d="M5 10c2-3 5-3 6 0l2 5" stroke="#4a1496" stroke-width=".8" fill="none"/></svg><svg style="left:8px;top:100px" width="24" height="24" viewBox="0 0 24 24"><path d="M2 15l6-4v-4l6-4 3 1v5l5 1v6l-9 6h-11z" fill="#c49cf8" stroke="#4a1496" stroke-width="1"/><path d="M8 11l3 1v4l-9 0M11 12l6-4M13 22v-6l9-6M11 16l2 0" stroke="#4a1496" stroke-width=".9" fill="none"/><path d="M8 7l6-4 3 1-6 4zM11 8v8l6-3v-5z" fill="#8a2cf0" stroke="#4a1496" stroke-width=".7"/></svg><svg style="left:8px;top:129px" width="24" height="24" viewBox="0 0 24 24"><path d="M3 6c3-3 7 0 10 0s6-2 8-1v4l-8 4-10-3z" fill="#40e0f4" stroke="#103040" stroke-width=".9"/><path d="M3 10v8l10 4 8-5v-8l-8 4z" fill="#8a2cf0" stroke="#4a1496" stroke-width=".9"/><path d="M3 13l10 4 8-4M3 16l10 4 8-5" stroke="#e8d8ff" stroke-width="1.100" fill="none"/><path d="M3 18l10 4 8-5" stroke="#a00010" stroke-width=".9" fill="none"/></svg><svg style="left:8px;top:156px" width="24" height="24" viewBox="0 0 24 24"><path d="M4 14l10-10c3-2 8 1 8 5l-11 11z" fill="#40e0f4" stroke="#103040" stroke-width="1"/><ellipse cx="7.500" cy="17" rx="4.500" ry="5" fill="#8a2cf0" stroke="#4a1496" stroke-width="1" transform="rotate(-30 7.500 17)"/><path d="M14 5c3-1 6 1 7 4" stroke="#d0f8ff" stroke-width="1" fill="none"/></svg><svg style="left:8px;top:191px" width="24" height="24" viewBox="0 0 24 24"><path d="M5 6l9-3 6 3-9 3z" fill="#40e0f4" stroke="#000" stroke-width="1"/><path d="M5 6l-2 12 8 4 1-13z" fill="#8a2cf0" stroke="#000" stroke-width="1"/><path d="M12 9l8-3v12l-9 4z" fill="#208088" stroke="#000" stroke-width="1"/></svg><svg style="left:29.200000000000045px;top:215px" width="7" height="4" viewBox="0 0 7 4"><path d="M0 0h7l-3.500 3.500z" fill="#000"/></svg><svg style="left:8px;top:222px" width="24" height="24" viewBox="0 0 24 24"><path d="M3 13l5-9 12 3-5 10z" fill="#8a2cf0" stroke="#000" stroke-width="1"/><path d="M3 13l1 6 11 3v-5z" fill="#6a1cc0" stroke="#000" stroke-width="1"/><path d="M15 17l5-10v5l-5 10z" fill="#4a1496" stroke="#000" stroke-width="1"/><path d="M9 8l8 2-4 8-6-2 3-4z" fill="#181860" stroke="#40e0f4" stroke-width="1.600"/></svg><svg style="left:8px;top:250px" width="24" height="24" viewBox="0 0 24 24"><path d="M2.500 5l12-2.500 6 1v14l-6 4.500h-12z" fill="#8a2cf0" stroke="#000" stroke-width="1"/><path d="M14.500 5v17M2.500 5h12l6-1.500" stroke="#000" stroke-width="1" fill="none"/><path d="M9 6v15M11 6v15M13 6v15" stroke="#40e0f4" stroke-width="1.800"/><path d="M7 8h1.500M7 11h1.500M7 14h1.500M7 17h1.500M7 20h1.500" stroke="#40e0f4" stroke-width="1.200"/><path d="M16 6l4-1v12l-4 3z" fill="#6a1cc0"/><path d="M3.500 7v14M5 7v14" stroke="#c49cf8" stroke-width=".8"/></svg><svg style="left:8px;top:278px" width="24" height="24" viewBox="0 0 24 24"><path d="M2.500 6.500l5-3.500h13v14l-5 4.500h-13z" fill="#40e0f4" stroke="#500010" stroke-width="1"/><path d="M2.500 6.500h13l5-3.500M15.500 6.500v15" stroke="#500010" stroke-width="1" fill="none"/><rect x="9" y="7" width="6" height="14" fill="#b890f0"/><path d="M15.500 7l4.500-3v13l-4.500 4z" fill="#9060e0"/><path d="M9 7l1.500 1.500M12 7l1.500 1.500M9 10l1.500 1.500M12 10l1.500 1.500M9 16l1.500 1.500M12 16l1.500 1.500M9 19l1.500 1.500" stroke="#1030e0" stroke-width=".8"/><path d="M5 14h12" stroke="#101060" stroke-width="1.600"/><path d="M19 14l-4-3v6z" fill="#101060"/></svg><svg style="left:8px;top:314px" width="24" height="24" viewBox="0 0 24 24"><path d="M6 6l6-4 5 2v4l4 1v7l-5 4-4-1-3 3-5-2 0-6z" fill="#8a2cf0" stroke="#4a1496" stroke-width="1"/><path d="M6 6l5 2 6-4M11 8v5l-3 2M17 8l-4 3v5l3 1M13 16l-4 4" stroke="#4a1496" stroke-width=".9" fill="none"/><ellipse cx="6" cy="17" rx="3.500" ry="4" fill="#c49cf8" stroke="#4a1496" stroke-width=".9"/><path d="M12 9l5-3M13 12l8-3" stroke="#c49cf8" stroke-width="1.200"/></svg><svg style="left:29.200000000000045px;top:338px" width="7" height="4" viewBox="0 0 7 4"><path d="M0 0h7l-3.500 3.500z" fill="#000"/></svg><svg style="left:8px;top:361px" width="24" height="24" viewBox="0 0 24 24"><path d="M2 8l6-6 4 4v4l4 4h6l-5 6h-5l-4-4-2 2z" fill="#40e0f4" stroke="#104858" stroke-width=".8"/><path d="M5 9h6c2 0 3 2 3 4l6 0-3 5c-4-1-8-1-10 2z" fill="#fff000" stroke="#000" stroke-width="1"/><path d="M3 11l-1 1 3 5M9 2l6 6M6 21c2-2 5-2 8 0" stroke="#1030e0" stroke-width="1.200" fill="none"/><path d="M3 7l4-4M17 18l3-4" stroke="#104858" stroke-width="2" stroke-dasharray="1 1"/></svg><svg style="left:8px;top:389px" width="24" height="24" viewBox="0 0 24 24"><path d="M8 3l8 2 5 4-7 11-8 2-4-5z" fill="#40e0f4" stroke="#104858" stroke-width=".8"/><path d="M8 9l8-2 1 7-8 4z" fill="#ffffa0" stroke="#1030e0" stroke-width="1.200"/><path d="M8 3v6l-6 8M16 5v2M17 14l-3 6M9 18l-3 4" stroke="#1030e0" stroke-width="1" fill="none"/><path d="M16 7l3 0M17 14l3-1" stroke="#e00000" stroke-width="1"/><path d="M3 4l3 3M3 20l2-2M19 18l2 2" stroke="#000" stroke-width=".8" stroke-dasharray="1 1"/></svg><svg style="left:8px;top:417px" width="24" height="24" viewBox="0 0 24 24"><rect x="2.500" y="2.500" width="18" height="18" fill="#ffffa0" stroke="#101070" stroke-width="1.600"/><circle cx="11.500" cy="11.500" r="5" fill="none" stroke="#101070" stroke-width="2"/></svg><svg style="left:29.200000000000045px;top:441px" width="7" height="4" viewBox="0 0 7 4"><path d="M0 0h7l-3.500 3.500z" fill="#000"/></svg><svg style="left:8px;top:446px" width="24" height="24" viewBox="0 0 24 24"><path d="M3 19l9-14 9-2v6l-9 5z" fill="#40e0f4" stroke="#80d8e0" stroke-width=".6"/><path d="M10 8l8-2 3 4-3 3 3 2v5l-6-2-6 3-3-3z" fill="#fff000" stroke="#707050" stroke-width=".8" opacity=".95"/><path d="M10 8l3 5-5 5M13 13l5 0M15 18v-4M18 6l-2 4" stroke="#707050" stroke-width=".8" fill="none"/><path d="M3 19l3-3" stroke="#808060" stroke-width="1.500"/></svg><svg style="left:8px;top:475px" width="24" height="24" viewBox="0 0 24 24"><path d="M7 2l10 1 5 9-4 9-10 1-6-7z" fill="#20e8f8"/><path d="M6 16l8-12 4 13z" fill="#ffffa0" stroke="#1030e0" stroke-width="1.300"/><path d="M11 17l3-13" stroke="#1030e0" stroke-width="1.200"/></svg><svg style="left:8px;top:525px" width="24" height="24" viewBox="0 0 24 24"><path d="M2 18c0-6 4-9 10-9s10 3 10 9h-5c0-2-2-3-5-3s-5 1-5 3z" fill="#40e0f4" stroke="#1040a0" stroke-width="1"/><path d="M12 8l-4 8h8z" fill="#fff000" stroke="#1030e0" stroke-width="1"/><path d="M12 9v-6" stroke="#000" stroke-width="1.300"/><path d="M12 1l-2.500 3.500h5z" fill="#000"/></svg><svg style="left:8px;top:551px" width="24" height="24" viewBox="0 0 24 24"><path d="M3 12l10-6 8 3-9 7z" fill="#40e0f4" stroke="#104858" stroke-width=".8"/><path d="M14 4l7 5v6l-9 7-9-6 2-2 7 4 7-5" fill="#30b8c8" stroke="#104858" stroke-width=".8"/><path d="M3 8l10-5 8 5-9 5z" fill="#d8d870" stroke="#000" stroke-width="1"/><path d="M3 8v2l9 5 9-5v-2" fill="#fff" stroke="#000" stroke-width=".8"/><path d="M4 21v-5M2 18l2-2.500 2 2.500" stroke="#000" stroke-width="1.200" fill="none"/></svg><svg style="left:8px;top:580px" width="24" height="24" viewBox="0 0 24 24"><path d="M6 14l10-6 6 3-9 7z" fill="#40e0f4" stroke="#104858" stroke-width=".8"/><path d="M15 4l7 5v6l-9 7-7-5 0-2 7 4 7-5" fill="#30b8c8" stroke="#104858" stroke-width=".8"/><path d="M4 7l10-4 8 5-10 5z" fill="#ffffa0" stroke="#000" stroke-width="1"/><path d="M4 7v2l8 5.500 10-5.500v-2" fill="#fff" stroke="#000" stroke-width=".8"/><path d="M4.500 22v-9" stroke="#e00000" stroke-width="2.400"/><path d="M4.500 22v-9" stroke="#fff000" stroke-width="1"/><path d="M4.500 10l-2.500 4h5z" fill="#e00000"/></svg><svg style="left:8px;top:607px" width="24" height="24" viewBox="0 0 24 24"><path d="M2 7l9-4 5 3-3 8z" fill="#40e0f4" stroke="#104858" stroke-width=".9"/><path d="M4 14l9 0 9-2-7 6-8 0z" fill="#a0ecf4" stroke="#104858" stroke-width=".9"/><path d="M2 7l2 7 4 8 7-4" fill="#30c0d0" stroke="#104858" stroke-width=".9"/><path d="M5 8l7 5M13 14l5 0" stroke="#104858" stroke-width=".7"/><path d="M13 4h6M17 2l2.500 2-2.500 2M18 16v5h3" stroke="#000" stroke-width="1.200" fill="none"/></svg><svg style="left:8px;top:654px" width="24" height="24" viewBox="0 0 24 24"><path d="M3 8l7-5 3 4-1 8-8 4z" fill="#a0ecf4" stroke="#1030e0" stroke-width="1"/><path d="M14 3c3 0 5 2 5 4s-2 4-5 3" fill="#ffffa0" stroke="#1030e0" stroke-width="1.100"/><path d="M1 22l20-20" stroke="#101070" stroke-width="1"/><path d="M6 13h11" stroke="#e00000" stroke-width="1.400"/><path d="M5 13l3.500-2.500v5zM18 13l-3.500-2.500v5z" fill="#e00000"/><path d="M5 19l3 3h12" stroke="#20b8c8" stroke-width="1.300" fill="none"/></svg><svg style="left:29.200000000000045px;top:678px" width="7" height="4" viewBox="0 0 7 4"><path d="M0 0h7l-3.500 3.500z" fill="#000"/></svg><svg style="left:48px;top:18px" width="24" height="24" viewBox="0 0 24 24"><rect x="2.500" y="2.500" width="8" height="8" fill="#2878ff" stroke="#103040" stroke-width="1"/><rect x="12.500" y="2.500" width="8" height="8" fill="#40e0f4" stroke="#103040" stroke-width="1"/><rect x="2.500" y="12.500" width="8" height="8" fill="#40e0f4" stroke="#103040" stroke-width="1"/><rect x="12.500" y="12.500" width="8" height="8" fill="#40e0f4" stroke="#103040" stroke-width="1"/><path d="M3 4l6 6M3 7l3 3M6 3l4 4M13 6l3-3M13 10l7-7M16 10l4-4M13 17l4-4M14 20l6-6M17 20l3-3" stroke="#1030e0" stroke-width="1"/><path d="M8 13c2 0 2 2 2 3" stroke="#104858" fill="none"/></svg><svg style="left:69.20000000000005px;top:42px" width="7" height="4" viewBox="0 0 7 4"><path d="M0 0h7l-3.500 3.500z" fill="#000"/></svg><svg style="left:48px;top:48px" width="24" height="24" viewBox="0 0 24 24"><path d="M2 3l14 1 4 6-8 3z" fill="#fff" stroke="#000" stroke-width="1"/><path d="M5 13c3-3 8-4 13-2l-6 10c-1-3-3-5-7-5z" fill="#40e0f4" stroke="#1030e0" stroke-width="1"/><path d="M2 17l3-4 0 3z" fill="#1030e0"/><path d="M12 21l6-10 2-1-2 4z" fill="#20a0b8"/><path d="M13 9l6-2v4l-7 3z" fill="#fff000"/><rect x="15.500" y="2.500" width="6" height="6" fill="#f0d890" stroke="#000" stroke-width="1"/><rect x="17.500" y="4.500" width="2" height="2.500" fill="#fff" stroke="#000" stroke-width=".7"/></svg><svg style="left:69.20000000000005px;top:72px" width="7" height="4" viewBox="0 0 7 4"><path d="M0 0h7l-3.500 3.500z" fill="#000"/></svg><svg style="left:48px;top:79px" width="24" height="24" viewBox="0 0 24 24"><path d="M2 13c1-6 5-9 10-9s9 3 10 9l-2 3c-3-3-5-4-8-4s-5 1-8 4z" fill="#40e0f4" stroke="#103040" stroke-width="1"/><path d="M3 14c3-3 6-4 9-4s6 1 9 4" stroke="#fff000" stroke-width="2" fill="none"/></svg><svg style="left:69.20000000000005px;top:103px" width="7" height="4" viewBox="0 0 7 4"><path d="M0 0h7l-3.500 3.500z" fill="#000"/></svg><svg style="left:48px;top:107px" width="24" height="24" viewBox="0 0 24 24"><path d="M3 6l8-3 7 3c3 3 4 8 2 12l-4 3v-5z" fill="#40e0f4" stroke="#103040" stroke-width="1"/><path d="M3 6l9 1c4 2 5 6 4 9l4-2c1-4 0-7-3-9z" fill="#ffffa0" stroke="#e00000" stroke-width=".9"/><path d="M3 6l8-3 7 3" fill="none" stroke="#103040" stroke-width="1"/><path d="M16 16v5l4-3z" fill="#20a0b8" stroke="#103040" stroke-width=".8"/></svg><svg style="left:69.20000000000005px;top:131px" width="7" height="4" viewBox="0 0 7 4"><path d="M0 0h7l-3.500 3.500z" fill="#000"/></svg><svg style="left:48px;top:139px" width="24" height="24" viewBox="0 0 24 24"><path d="M3 7l5-5v12l-5 5z" fill="#a8ecf4" stroke="#208898" stroke-width="1.200" stroke-dasharray="1.200 1.200"/><path d="M15 8l6-6v13l-6 6z" fill="#40e0f4" stroke="#1030e0" stroke-width="1"/><path d="M7 16l2 3h4" stroke="#000" stroke-width="1.100" fill="none" stroke-dasharray="1.500 1"/><path d="M15 19l-3.500-2v4z" fill="#000"/></svg><svg style="left:69.20000000000005px;top:163px" width="7" height="4" viewBox="0 0 7 4"><path d="M0 0h7l-3.500 3.500z" fill="#000"/></svg><svg style="left:48px;top:169px" width="24" height="24" viewBox="0 0 24 24"><path d="M2 14l7-8c4-2 8-2 12 0v9l-5 6c-1-4-4-5-7-4z" fill="#40e0f4" stroke="#103040" stroke-width="1"/><path d="M9 6c4-2 8-2 12 0v6c-4-2-8-2-12 0z" fill="#fff000" stroke="#605000" stroke-width=".8"/><path d="M15 5v6" stroke="#605000" stroke-width=".8"/><path d="M2 14l2 2 5-4M19 4l3 1-2-4z" fill="#000"/></svg><svg style="left:69.20000000000005px;top:193px" width="7" height="4" viewBox="0 0 7 4"><path d="M0 0h7l-3.500 3.500z" fill="#000"/></svg><svg style="left:48px;top:240px" width="24" height="24" viewBox="0 0 24 24"><path d="M2 14l8-6 12 2-9 8z" fill="#40e0f4" stroke="#e8f8ff" stroke-width=".6"/><path d="M3 12l17 3M2 14l16 3M5 10l16 3" stroke="#fff" stroke-width="1" /><path d="M2 16l10 5 10-6" stroke="#fff000" stroke-width="1.800" fill="none"/><path d="M2 17.500l10 5" stroke="#1030e0" stroke-width="1" fill="none"/><path d="M10 14l9-9" stroke="#e00000" stroke-width="2.600"/><path d="M10 14l9-9" stroke="#fff000" stroke-width="1" stroke-dasharray="2 2"/><path d="M22 2l-7 1 6 6z" fill="#e00000"/><path d="M20.500 3.500l-3 .5 2.500 2.500z" fill="#ffffa0"/></svg><svg style="left:69.20000000000005px;top:264px" width="7" height="4" viewBox="0 0 7 4"><path d="M0 0h7l-3.500 3.500z" fill="#000"/></svg><svg style="left:48px;top:270px" width="24" height="24" viewBox="0 0 24 24"><path d="M2 9c5-6 14-6 20-1l-3 6c-4-4-10-4-14 0z" fill="#c8f4fc" stroke="#1030e0" stroke-width="1"/><path d="M4 9c5-4 11-4 16 0" stroke="#40e0f4" stroke-width="1.600" fill="none"/><path d="M3 19c4-5 13-5 18 0l-3 3c-3-3-8-3-11 0z" fill="#208898" stroke="#1030e0" stroke-width="1"/><path d="M4 21c4-3 11-3 15 0" stroke="#40e0f4" stroke-width="1.400" fill="none"/><path d="M11 20v-10" stroke="#e00000" stroke-width="2.600"/><path d="M11 20v-10" stroke="#fff000" stroke-width="1"/><path d="M11 6l-3.500 5h7z" fill="#e00000"/></svg><svg style="left:69.20000000000005px;top:294px" width="7" height="4" viewBox="0 0 7 4"><path d="M0 0h7l-3.500 3.500z" fill="#000"/></svg><svg style="left:48px;top:300px" width="24" height="24" viewBox="0 0 24 24"><path d="M8 8l10-5 4 3v10l-10 6z" fill="#40e0f4" stroke="#103040" stroke-width="1"/><path d="M8 8c4 2 9 0 14-2v4c-5 2-10 4-13 2z" fill="#208898" stroke="#103040" stroke-width=".8"/><path d="M8 8c-2 6 0 10 4 14" stroke="#103040" stroke-width="1" fill="none"/><path d="M2 9l5-5" stroke="#000" stroke-width="1.100"/><path d="M9 2l-4.500 1 3.500 3.500z" fill="#000"/></svg><svg style="left:69.20000000000005px;top:324px" width="7" height="4" viewBox="0 0 7 4"><path d="M0 0h7l-3.500 3.500z" fill="#000"/></svg><svg style="left:48px;top:330px" width="24" height="24" viewBox="0 0 24 24"><path d="M3 12c0-6 4-10 9-10s9 4 9 10" fill="#a8ecf4" stroke="#104858" stroke-width="1.200" stroke-dasharray="1.200 1"/><path d="M3 13c3 2 6 3 9 3s6-1 9-3v6l-3 3c-2-2-4-3-6-3s-4 1-6 3l-3-3z" fill="#40e0f4" stroke="#104858" stroke-width="1"/><path d="M12 4c4 2 7 5 8 9-3 2-5 2-8 2s-5 0-8-2c1-4 4-7 8-9z" fill="#ffd040" stroke="#e00000" stroke-width="1.200"/><path d="M12 5c-2 3-3 6-3 10M12 5c2 3 3 6 3 10" stroke="#e00000" stroke-width=".8" fill="none"/><path d="M12 7c1.500 2 2 4 2 7h-4c0-3 .5-5 2-7z" fill="#ffffa0"/></svg><svg style="left:48px;top:358px" width="24" height="24" viewBox="0 0 24 24"><path d="M4 14c1-7 5-11 10-11 4 0 7 3 8 8" fill="#40e0f4" stroke="#104858" stroke-width="1"/><path d="M6 13c2-5 5-7 9-7 3 0 5 2 6 5-2-2-4-3-7-2s-5 2-8 4z" fill="#fff000" stroke="#605000" stroke-width=".7"/><path d="M8 15c3-4 7-5 10-3 2 2 3 5 3 8-2-3-5-4-7-3s-4 1-6-2z" fill="#40e0f4" stroke="#104858" stroke-width="1"/><path d="M3 22c0-5 1-8 3-10M21 22c0-3-1-6-2-8" stroke="#000" stroke-width="1.200" fill="none"/><path d="M4 22c3-4 12-4 16 0" stroke="#fff" stroke-width="1.300" fill="none"/></svg><svg style="left:48px;top:386px" width="24" height="24" viewBox="0 0 24 24"><path d="M2 8l11-5 8 5-10 4z" fill="#40e0f4" stroke="#104858" stroke-width="1"/><path d="M11 12l10-4-4 5-9 4z" fill="#1030e0"/><path d="M8 17l9-4 5 3-11 5z" fill="#fff000" stroke="#605000" stroke-width=".8"/><path d="M8 17v3l3 3 11-6v-2l-11 5z" fill="#208898" stroke="#104858" stroke-width=".8"/><path d="M2 8l9 4" stroke="#104858"/></svg><svg style="left:48px;top:433px" width="24" height="24" viewBox="0 0 24 24"><path d="M4 14c-3-6 1-11 7-11 5 0 8 3 9 8l2-1-3 6-6-3 3-1c-1-3-3-4-5-4-4 0-5 3-4 6z" fill="#40e0f4" stroke="#1030e0" stroke-width="1"/><path d="M8 17l4 5M12 17l-4 5" stroke="#000" stroke-width="1"/><text x="14" y="23" font-size="9" font-family="Liberation Sans,sans-serif" fill="#1030e0">N</text></svg><svg style="left:69.20000000000005px;top:457px" width="7" height="4" viewBox="0 0 7 4"><path d="M0 0h7l-3.500 3.500z" fill="#000"/></svg><svg style="left:48px;top:465px" width="24" height="24" viewBox="0 0 24 24"><path d="M4 5h16M5 4v16" stroke="#1030e0" stroke-width="1.200"/><path d="M4 12h16M12 4v16" stroke="#1030e0" stroke-width="1.200"/><path d="M4 19h16M19 4v16" stroke="#1030e0" stroke-width="1.200"/><circle cx="5" cy="5" r="1.800" fill="#c8f4fc" stroke="#1030e0" stroke-width="1"/><circle cx="5" cy="12" r="1.800" fill="#c8f4fc" stroke="#1030e0" stroke-width="1"/><circle cx="5" cy="19" r="1.800" fill="#c8f4fc" stroke="#1030e0" stroke-width="1"/><circle cx="12" cy="5" r="1.800" fill="#c8f4fc" stroke="#1030e0" stroke-width="1"/><circle cx="12" cy="12" r="1.800" fill="#c8f4fc" stroke="#1030e0" stroke-width="1"/><circle cx="12" cy="19" r="1.800" fill="#c8f4fc" stroke="#1030e0" stroke-width="1"/><circle cx="19" cy="5" r="1.800" fill="#c8f4fc" stroke="#1030e0" stroke-width="1"/><circle cx="19" cy="12" r="1.800" fill="#c8f4fc" stroke="#1030e0" stroke-width="1"/><circle cx="19" cy="19" r="1.800" fill="#c8f4fc" stroke="#1030e0" stroke-width="1"/></svg><svg style="left:69.20000000000005px;top:489px" width="7" height="4" viewBox="0 0 7 4"><path d="M0 0h7l-3.500 3.500z" fill="#000"/></svg><svg style="left:48px;top:495px" width="24" height="24" viewBox="0 0 24 24"><rect x="2.500" y="4.500" width="14" height="15" rx="1" fill="#b0a868" stroke="#000" stroke-width="1"/><path d="M6 5l2-3h4l2 3z" fill="#f0b020" stroke="#000" stroke-width=".8"/><rect x="7" y="6" width="10" height="10" fill="#f0e090" stroke="#605000" stroke-width=".6"/><path d="M10 13c-1-3 1-6 3-5s-1 4 1 5 2-2 2-4" stroke="#d01010" stroke-width="1.200" fill="none"/><path d="M7 19l4-3h10l-4 3z" fill="#fff000" stroke="#000" stroke-width=".8"/><path d="M8 22l12-9v-4" stroke="#20a8c0" stroke-width="1.300" fill="none"/></svg><svg style="left:48px;top:523px" width="24" height="24" viewBox="0 0 24 24"><path d="M3 8l9-5 3 8-8 4z" fill="#ffd860" stroke="#000" stroke-width="1"/><path d="M3 15l8 4 10-6-8-3z" fill="#ffffa0" stroke="#000" stroke-width="1"/><path d="M3 15v3l8 4 10-6v-3" fill="#fff000" stroke="#000" stroke-width="1"/><path d="M7 15l10-2M9 17l8-3" stroke="#30a8c0" stroke-width="1"/><path d="M11 16l10-12" stroke="#1030e0" stroke-width="2.200"/><path d="M11 16l10-12" stroke="#60b0ff" stroke-width=".8"/></svg><svg style="left:69.20000000000005px;top:547px" width="7" height="4" viewBox="0 0 7 4"><path d="M0 0h7l-3.500 3.500z" fill="#000"/></svg><svg style="left:48px;top:553px" width="24" height="24" viewBox="0 0 24 24"><path d="M3 21v-10l5 0v3l4-3 3 3 4-3v5l2-2v5l-3 3z" fill="#ffe870" stroke="#000" stroke-width="1.100"/><path d="M19 11l2-1v6" fill="#d8b830" stroke="#000" stroke-width=".8"/><rect x="6" y="16" width="3" height="5" fill="#fff" stroke="#000" stroke-width="1"/><path d="M4 9c0-4 3-6 8-6" stroke="#505050" stroke-width="2.200" fill="none"/><path d="M4 8c1-3 3-4 7-4" stroke="#a0a0a0" stroke-width=".8" fill="none"/></svg><svg style="left:69.20000000000005px;top:577px" width="7" height="4" viewBox="0 0 7 4"><path d="M0 0h7l-3.500 3.500z" fill="#000"/></svg><svg style="left:48px;top:600px" width="24" height="24" viewBox="0 0 24 24"><path d="M2 17l5-3 5 3-5 3zM22 17l-5-3-5 3 5 3zM4 10l4 2M20 10l-4 2" fill="#ffd860" stroke="#e03010" stroke-width="1.100"/><path d="M8 8l4-3 4 3-4 3z" fill="#80d0ff" stroke="#1030e0" stroke-width="1"/><path d="M8 8v6l4 3v-6zM12 11v6l4-3v-6z" fill="#30a0f0" stroke="#1030e0" stroke-width="1"/><path d="M3 9l4 2M21 9l-4 2" stroke="#e03010" stroke-width="1.500"/></svg><svg style="left:48px;top:628px" width="24" height="24" viewBox="0 0 24 24"><path d="M2 10c2-6 8-9 14-7l6 3-2 6c-3-3-7-4-10-3s-5 3-5 5z" fill="#40e0f4" stroke="#1030e0" stroke-width="1"/><path d="M4 10c3-4 9-6 15-3" stroke="#20a8c0" stroke-width="1.200" fill="none"/><path d="M2 22l5-4h15l-5 4z" fill="#1030e0"/><path d="M6 20.500l2-1.500h11l-2 1.500z" fill="#40e0f4"/><path d="M12 5v14" stroke="#000" stroke-width="1.200"/><path d="M12 3l-2.500 3.500h5zM12 21l-2.500-3.500h5z" fill="#000"/></svg><svg style="left:48px;top:655px" width="24" height="24" viewBox="0 0 24 24"><path d="M2 7l20-5" stroke="#1030e0" stroke-width="1.300"/><path d="M2 21c0-7 4-10 10-10s10 3 10 10h-4c0-3-3-5-6-5s-6 2-6 5z" fill="#40e0f4" stroke="#1030e0" stroke-width="1"/><path d="M4 20c1-5 4-6 8-6s7 1 8 6" stroke="#fff000" stroke-width="1.400" fill="none"/><path d="M12 5v6" stroke="#000" stroke-width="1.200"/><path d="M12 12.500l-2.500-3.500h5z" fill="#000"/></svg><svg style="left:88px;top:17px" width="24" height="24" viewBox="0 0 24 24"><path d="M7.500 2.500l12 10.500-5.500 .8 3.800 6.700-2.600 1.300-3.800-6.800-3.900 3.800z" fill="#fff2e4" stroke="#ff8000" stroke-width="1.700" stroke-linejoin="round"/></svg><svg style="left:109.20000000000005px;top:39.5px" width="7" height="4" viewBox="0 0 7 4"><path d="M0 0h7l-3.500 3.500z" fill="#000"/></svg><svg style="left:88px;top:48px" width="24" height="24" viewBox="0 0 24 24"><path d="M9 2l3 3-3 3-3-3zM19 3l2.500 2.500-2.500 2.500-2.500-2.500zM5 9l2 2-2 2-2-2zM3 17l1.500 1.500-1.500 1.500-1.500-1.500zM7 14l2 2-2 2-2-2z" fill="#000"/><path d="M11 9l9 6-4 1 3 5-2 1-3-5-3 3z" fill="#ffe040" stroke="#103040" stroke-width="1"/></svg><svg style="left:109.20000000000005px;top:70.5px" width="7" height="4" viewBox="0 0 7 4"><path d="M0 0h7l-3.500 3.500z" fill="#000"/></svg><svg style="left:88px;top:94px" width="24" height="24" viewBox="0 0 24 24"><path d="M2.500 4.500h14l5 15h-19z" fill="#fff" stroke="#101070" stroke-width="1.200"/><circle cx="9" cy="13" r="3.800" fill="none" stroke="#30b0a0" stroke-width="1.400"/><path d="M10 14l8-12 2.500 1.500-8 12z" fill="#e8c840" stroke="#101070" stroke-width="1"/><path d="M10 14l-.5 3 3-1.500z" fill="#101070"/></svg><svg style="left:109.20000000000005px;top:116.5px" width="7" height="4" viewBox="0 0 7 4"><path d="M0 0h7l-3.500 3.500z" fill="#000"/></svg><svg style="left:88px;top:140px" width="24" height="24" viewBox="0 0 24 24"><rect x="10" y="10" width="4.500" height="4.500" fill="#101070"/><path d="M10.500 15h4.500v-4.500" stroke="#40e0f4" stroke-width="1" fill="none"/></svg><svg style="left:109.20000000000005px;top:162.5px" width="7" height="4" viewBox="0 0 7 4"><path d="M0 0h7l-3.500 3.500z" fill="#000"/></svg><svg style="left:88px;top:170px" width="24" height="24" viewBox="0 0 24 24"><path d="M3 21l18-18" stroke="#101070" stroke-width="1.600"/><path d="M4 21.500l18-18" stroke="#40e0f4" stroke-width=".9"/></svg><svg style="left:109.20000000000005px;top:192.5px" width="7" height="4" viewBox="0 0 7 4"><path d="M0 0h7l-3.500 3.500z" fill="#000"/></svg><svg style="left:88px;top:202px" width="24" height="24" viewBox="0 0 24 24"><path d="M2 17l8-8h12l-8 8z" fill="#ffe890" stroke="#101070" stroke-width="1.200"/><path d="M2 17.500h12l8-8" stroke="#101070" stroke-width="1.200" fill="none"/></svg><svg style="left:109.20000000000005px;top:224.5px" width="7" height="4" viewBox="0 0 7 4"><path d="M0 0h7l-3.500 3.500z" fill="#000"/></svg><svg style="left:88px;top:239px" width="24" height="24" viewBox="0 0 24 24"><path d="M4 8c3 2 6 2 8-1s5-4 8-3" stroke="#208898" stroke-width="1.100" fill="none"/><path d="M20 4v12" stroke="#fff" stroke-width="1"/><path d="M3 17c1-4 5-6 9-6s8 1 10 5l-2 4c-2-3-5-4-8-4s-5 1-7 4z" fill="#40e0f4" stroke="#1030e0" stroke-width="1"/><path d="M5 18c2-3 4-4 7-4s6 1 8 4" stroke="#fff000" stroke-width="1.600" fill="none"/></svg><svg style="left:109.20000000000005px;top:261.5px" width="7" height="4" viewBox="0 0 7 4"><path d="M0 0h7l-3.500 3.500z" fill="#000"/></svg><svg style="left:88px;top:269px" width="24" height="24" viewBox="0 0 24 24"><path d="M5 4l5 2 6-3 6 3v10l-5 2z" fill="#208898" stroke="#000" stroke-width="1"/><path d="M5 4v6l4 3v-6z" fill="#40e0f4" stroke="#000" stroke-width=".8"/><path d="M16 8l6-2v10l-5 2z" fill="#30b8c8" stroke="#000" stroke-width=".6" stroke-dasharray="1 1"/><path d="M2 15c2-6 8-8 13-5l5 4-5 7c-1-4-4-6-7-5z" fill="#40e0f4" stroke="#1030e0" stroke-width="1"/><path d="M11 9c3 1 5 4 5 8" stroke="#fff000" stroke-width="2" fill="none"/><path d="M2 15l2 3 4-2" fill="#1030e0"/></svg><svg style="left:88px;top:297px" width="24" height="24" viewBox="0 0 24 24"><path d="M2 15c2-6 7-10 14-11l6 3c-4 2-6 6-7 12l-3 3c0-5-4-7-7-5z" fill="#40e0f4" stroke="#1030e0" stroke-width="1.100"/><path d="M13 5c3 1 5 3 6 6" stroke="#fff000" stroke-width="1.800" fill="none"/><path d="M9 8c3 1 6 4 6 9" stroke="#208898" stroke-width="1.200" fill="none"/><path d="M2 15l2 3 3-2" fill="#1030e0"/></svg><svg style="left:109.20000000000005px;top:319.5px" width="7" height="4" viewBox="0 0 7 4"><path d="M0 0h7l-3.500 3.500z" fill="#000"/></svg><svg style="left:88px;top:334px" width="24" height="24" viewBox="0 0 24 24"><circle cx="12" cy="12" r="8.500" fill="none" stroke="#101070" stroke-width="1.300"/><circle cx="12" cy="12" r="7.500" fill="none" stroke="#40e0f4" stroke-width="1"/></svg><svg style="left:109.20000000000005px;top:356.5px" width="7" height="4" viewBox="0 0 7 4"><path d="M0 0h7l-3.500 3.500z" fill="#000"/></svg><svg style="left:88px;top:363px" width="24" height="24" viewBox="0 0 24 24"><path d="M4 19c0-4 2-7 6-7s9 1 10-4c0-3-3-5-6-5s-5 1-7 3" stroke="#1030e0" stroke-width="1.300" fill="none"/><path d="M4.500 19c0-4 2-6 6-6" stroke="#40e0f4" stroke-width="1" fill="none"/><g fill="#1030e0"><circle cx="4" cy="19" r="1.600"/><circle cx="9" cy="12" r="1.600"/><circle cx="17" cy="16" r="1.600"/><circle cx="20" cy="8" r="1.600"/><circle cx="7" cy="6" r="1.600"/></g><path d="M10 12c4 0 6 2 7 4" stroke="#1030e0" stroke-width="1.300" fill="none"/></svg><svg style="left:109.20000000000005px;top:385.5px" width="7" height="4" viewBox="0 0 7 4"><path d="M0 0h7l-3.500 3.500z" fill="#000"/></svg><svg style="left:88px;top:411px" width="24" height="24" viewBox="0 0 24 24"><path d="M2.500 2v19h20" stroke="#101070" stroke-width="1.400" fill="none"/><path d="M3 21c2-12 6-18 11-17 4 1 6 5 7 9" stroke="#1030e0" stroke-width="1.300" fill="none"/><path d="M3 21l19-16" stroke="#fff000" stroke-width="1.600"/><path d="M3 21l19-16" stroke="#807000" stroke-width=".4"/></svg><svg style="left:88px;top:632px" width="24" height="24" viewBox="0 0 24 24"><path d="M3 8c6-3 13-1 15 5l1 8h-4l-1-7c-1-3-5-5-10-3z" fill="#e8c040" stroke="#000" stroke-width="1"/><path d="M5 9c5-1 9 1 10 5" stroke="#a02010" stroke-width="1" fill="none"/><path d="M12 3l4 2 7 14-3 2-5-4z" fill="#000"/><path d="M13 5l3 1 2 4-3 0z" fill="#fff"/><g fill="#e02010"><rect x="3" y="3" width="1.200" height="1.200"/><rect x="7" y="2" width="1.200" height="1.200"/><rect x="2" y="12" width="1.200" height="1.200"/><rect x="5" y="15" width="1.200" height="1.200"/><rect x="9" y="13" width="1.200" height="1.200"/><rect x="3" y="19" width="1.200" height="1.200"/><rect x="8" y="20" width="1.200" height="1.200"/><rect x="11" y="17" width="1.200" height="1.200"/><rect x="19" y="3" width="1.200" height="1.200"/></g><g fill="#e8c000"><rect x="5" y="5" width="1.200" height="1.200"/><rect x="10" y="4" width="1.200" height="1.200"/><rect x="4" y="17" width="1.200" height="1.200"/><rect x="7" y="11" width="1.200" height="1.200"/><rect x="6" y="22" width="1.200" height="1.200"/><rect x="16" y="2" width="1.200" height="1.200"/></g></svg><svg style="left:88px;top:678px" width="24" height="24" viewBox="0 0 24 24"><path d="M2 9l10-5h10l-4 5z" fill="#f0b090" stroke="#a06040" stroke-width=".6"/><path d="M18 9l4-5v10l-4 6z" fill="#808080"/><path d="M12 4l-3 5h5l3-5z" fill="#c08060"/><path d="M2 9h6v6h4v-6h6v7l-3 4h-10l-3-4z" fill="#ffe000" stroke="#d01010" stroke-width="1.600"/><path d="M4 11h2v5l1 2h6l3-2v-5" stroke="#d01010" stroke-width=".8" fill="none" stroke-dasharray="1 1"/></svg>
</div>
<div id="bb" class="abs">
<div class="abs grip" style="left:6px;top:5px;height:16px"></div><div class="abs grip" style="left:310px;top:5px;height:16px"></div><div class="abs grip" style="left:523px;top:5px;height:16px"></div><div class="abs grip" style="left:901px;top:5px;height:16px"></div><div class="abs grip" style="left:948px;top:5px;height:16px"></div><div class="abs grip" style="left:1052px;top:5px;height:16px"></div><div class="abs grip" style="left:1098px;top:5px;height:16px"></div><div class="abs grip" style="left:1665px;top:5px;height:16px"></div><div class="abs grip" style="left:1741px;top:5px;height:16px"></div><div class="abs grip" style="left:1789px;top:5px;height:16px"></div><svg style="left:17px;top:9px" width="24" height="24" viewBox="0 0 24 24"><path d="M4 3.500h11l4 4v13h-15z" fill="#ffffd0" stroke="#000" stroke-width="1"/><path d="M15 3.500v4h4" fill="#fff" stroke="#000" stroke-width="1"/></svg><svg style="left:45px;top:9px" width="24" height="24" viewBox="0 0 24 24"><path d="M3 7.500h6l2 2h7v10h-15z" fill="#d8a820" stroke="#000" stroke-width="1"/><path d="M3 19.500l4-8h15l-4 8z" fill="#ffd84a" stroke="#000" stroke-width="1"/><path d="M14 5c2-2 5-2 6.500 0" stroke="#000" stroke-width="1" fill="none"/><path d="M21.500 3v3.500h-3.500z" fill="#000"/></svg><svg style="left:73px;top:9px" width="24" height="24" viewBox="0 0 24 24"><rect x="3.500" y="3.500" width="17" height="17" rx="1" fill="#1a1a10" stroke="#000"/><rect x="3.800" y="4" width="3" height="16" fill="#d8d020"/><rect x="7" y="4" width="11" height="8" fill="#fff"/><path d="M8 6h9M8 8h9M8 10h9" stroke="#3a6ae8" stroke-width="1"/><rect x="7" y="14" width="11" height="6" fill="#d0d040"/><rect x="8" y="15" width="4" height="5" fill="#000"/><rect x="18" y="4" width="2.500" height="16" fill="#d8d020"/></svg><svg style="left:101px;top:9px" width="24" height="24" viewBox="0 0 24 24"><path d="M7 9l3-7h9l-3 7z" fill="#fff" stroke="#000" stroke-width=".8"/><path d="M10 4h7M9.500 5.500h7M9 7h7" stroke="#2858e8" stroke-width="1"/><path d="M2.500 13l4-4h14l-4 4z" fill="#e8e8b0" stroke="#000" stroke-width=".8"/><path d="M2.500 13h14v7h-14z" fill="#c0c078" stroke="#000" stroke-width=".8"/><path d="M16.500 13l4-4v7l-4 4z" fill="#888840" stroke="#000" stroke-width=".8"/><path d="M11 16h4" stroke="#20b020" stroke-width="1.500"/><path d="M3 18h13" stroke="#fff" stroke-width="1"/></svg><svg style="left:128px;top:9px" width="24" height="24" viewBox="0 0 24 24"><path d="M7 2l5.500 12M17 2l-5.500 12" stroke="#303030" stroke-width="1.600" fill="none"/><path d="M8 3l4 9M16 3l-4 9" stroke="#b0b0b0" stroke-width=".8"/><circle cx="8.500" cy="18.500" r="3" fill="#40a0ff" stroke="#1030c0" stroke-width="1.500"/><circle cx="16" cy="18.500" r="3" fill="#40a0ff" stroke="#1030c0" stroke-width="1.500"/><circle cx="8.500" cy="18.500" r="1" fill="#d0e8ff"/><circle cx="16" cy="18.500" r="1" fill="#d0e8ff"/></svg><svg style="left:157px;top:9px" width="24" height="24" viewBox="0 0 24 24"><path d="M2.500 2.500h8l3 3v11h-11z" fill="#fff" stroke="#000" stroke-width="1"/><path d="M4 6h6M4 8h7M4 10h7M4 12h7" stroke="#2040e0" stroke-width="1"/><path d="M9.500 8.500h8l3 3v10h-11z" fill="#fff" stroke="#000" stroke-width="1"/><path d="M11 12h6M11 14h8M11 16h8M11 18h8" stroke="#2040e0" stroke-width="1"/></svg><svg style="left:185px;top:9px" width="24" height="24" viewBox="0 0 24 24"><rect x="3.500" y="4.500" width="14" height="15" rx="1" fill="#a8a060" stroke="#000" stroke-width="1"/><path d="M7 5l2-3h4l2 3z" fill="#f0b020" stroke="#000" stroke-width=".8"/><rect x="5" y="7" width="11" height="11" fill="#c8c088"/><path d="M11.500 12.500h7l3 3v6h-10z" fill="#fff" stroke="#000" stroke-width="1"/><path d="M13 16h5M13 18h7M13 20h7" stroke="#2040e0" stroke-width="1"/></svg><svg style="left:213px;top:9px" width="24" height="24" viewBox="0 0 24 24"><path d="M3 11l7-6v4c6-1 11 2 11 7 0 3-2 5-4 6l-2-2c2-1 3-2 3-4 0-3-4-4-8-3v4z" fill="#20d090" stroke="#107050" stroke-width=".8"/></svg><svg style="left:233.5px;top:31px" width="7" height="4" viewBox="0 0 7 4"><path d="M0 0h7l-3.500 3.500z" fill="#000"/></svg><svg style="left:244px;top:9px" width="24" height="24" viewBox="0 0 24 24"><path d="M21 11l-7-6v4c-6-1-11 2-11 7 0 3 2 5 4 6l2-2c-2-1-3-2-3-4 0-3 4-4 8-3v4z" fill="#d8d8e8" stroke="#fff" stroke-width="1.200"/><path d="M21 11l-7-6v4c-6-1-11 2-11 7" fill="none" stroke="#a0a0b4" stroke-width=".8"/></svg><svg style="left:263.5px;top:31px" width="7" height="4" viewBox="0 0 7 4"><path d="M0 0h7l-3.500 3.500z" fill="#000"/></svg><svg style="left:273px;top:9px" width="24" height="24" viewBox="0 0 24 24"><path d="M3 3l2 14 3-3 3 6 2.500-1-3-6 4-.5z" fill="#ffe860" stroke="#000" stroke-width="1"/><path d="M13 7c0-3 2-4.500 4.500-4.500s4.500 1.500 4.500 4c0 3-3.500 3-3.500 6.500" stroke="#101078" stroke-width="2.800" fill="none"/><circle cx="18.300" cy="17.500" r="1.700" fill="#101078"/><path d="M14.500 8c0-2 1.500-3 3-3" stroke="#30b0c0" stroke-width=".8" fill="none"/></svg><svg style="left:320px;top:9px" width="24" height="24" viewBox="0 0 24 24"><path d="M11 3.500c-3-1.500-5 0-5.500 3l-2 12c-.3 2-1.500 2-2.500 1.500" stroke="#000" stroke-width="1.900" fill="none"/><path d="M2.500 9.500h7" stroke="#000" stroke-width="1.600"/><path d="M13 11c-2 3-2 7 0 10M22 11c2 3 2 7 0 10" stroke="#000" stroke-width="1.400" fill="none"/><path d="M15 13l5 6M20 13l-5 6" stroke="#000" stroke-width="1.500"/></svg><svg style="left:348px;top:9px" width="24" height="24" viewBox="0 0 24 24"><path d="M12 3c5.500 0 10 3 10 7.500s-4.500 7.500-10 7.500c-1 0-2-.1-3-.3l-5 3.800 1.500-5.300c-2.200-1.400-3.500-3.400-3.500-5.700 0-4.500 4.500-7.500 10-7.500z" fill="#fff" stroke="#000" stroke-width="1.700"/><path d="M7 7.500h5M14 7.500h4M6 10h3M11 10h8M7 12.500h6M15 12.500h3M9 15h5" stroke="#000" stroke-width="1" stroke-dasharray="2.500 .8"/></svg><svg style="left:373px;top:9px" width="24" height="24" viewBox="0 0 24 24"><path d="M9.500 11v-3c0-1.500 1-2.500 2.500-2.500s2.500 1 2.500 2.500v3" stroke="#a8a8bc" stroke-width="1.800" fill="none"/><path d="M10 10h4" stroke="#c0c0d0" stroke-width="1.500"/><ellipse cx="12" cy="15.500" rx="3" ry="2.500" fill="#f0f0f8" stroke="#b0b0c4" stroke-width="1"/></svg><svg style="left:398px;top:9px" width="24" height="24" viewBox="0 0 24 24"><rect x="3" y="3" width="17" height="17" fill="#fff"/><rect x="3" y="3" width="17" height="3.500" fill="#1020d8"/><path d="M3.500 6.500v13.500M6.900 6.500v13.500M10.300 6.500v13.500M13.700 6.500v13.500M17.100 6.500v13.500M20 6.500v13.500M3 9.500h17M3 13h17M3 16.500h17M3 20h17" stroke="#000" stroke-width="1.300"/></svg><svg style="left:418.5px;top:31px" width="7" height="4" viewBox="0 0 7 4"><path d="M0 0h7l-3.500 3.500z" fill="#000"/></svg><svg style="left:428px;top:9px" width="24" height="24" viewBox="0 0 24 24"><rect x="1.500" y="9.500" width="4" height="6" fill="#ffe870" stroke="#1020c0" stroke-width="1"/><path d="M5.500 12.500h9M10 12.500l4-6M10 12.500v7h4" stroke="#000" stroke-width="1" fill="none"/><path d="M7.500 8.500l5-5M9 3.500h3.500v3.500M7.500 8.500v-2.500M7.500 8.500h2.500" stroke="#000" stroke-width=".9" fill="none"/><rect x="17.500" y="2.500" width="4" height="4" fill="#a0e8ff" stroke="#1030e0" stroke-width="1.200"/><rect x="17.500" y="10.500" width="4" height="4" fill="#a0e8ff" stroke="#1030e0" stroke-width="1.200"/><rect x="17.500" y="18" width="4" height="4" fill="#a0e8ff" stroke="#1030e0" stroke-width="1.200"/><path d="M13.500 7h3M15 5.500v3M13.500 20h3M15 18.500v3" stroke="#e00000" stroke-width="1.200"/><path d="M14 12.500h3" stroke="#000"/></svg><svg style="left:456px;top:9px" width="24" height="24" viewBox="0 0 24 24"><path d="M8 10v-4c0-2.500 1.800-4 4-4s4 1.500 4 4v4" stroke="#404040" stroke-width="2.200" fill="none"/><path d="M9 10v-4c0-1.800 1.300-3 3-3" stroke="#c8c8c8" stroke-width="1" fill="none"/><path d="M5 10.500l3-1.500h10l1 1.500v9l-1 1.500h-11l-2-2z" fill="#909090" stroke="#202020" stroke-width="1"/><path d="M5 10.500h3v10.500" fill="none" stroke="#d0d0d0" stroke-width="1"/><rect x="11.500" y="13" width="2" height="5" fill="#202020"/><path d="M8 12v8M16 12v8" stroke="#606060" stroke-width=".8" stroke-dasharray="1 1"/></svg><svg style="left:476.5px;top:31px" width="7" height="4" viewBox="0 0 7 4"><path d="M0 0h7l-3.500 3.500z" fill="#000"/></svg><svg style="left:486px;top:9px" width="24" height="24" viewBox="0 0 24 24"><rect x="2.500" y="2.500" width="6" height="6" fill="#40b0a0" stroke="#e8c000" stroke-width="1.300"/><rect x="2.500" y="10.500" width="6" height="6" fill="#40b0a0" stroke="#e8c000" stroke-width="1.300"/><rect x="3.500" y="3.500" width="4" height="2" fill="#206870"/><rect x="3.500" y="11.500" width="4" height="2" fill="#206870"/><path d="M2.500 19.500h1.500M5 19.500h1.500M7.500 19.500h1.500" stroke="#000" stroke-width="1"/><path d="M11 2c2 0 2.500 1 2.500 3v3c0 1.500.5 2.500 2 2.500-1.500 0-2 1-2 2.500v3c0 2-.5 3-2.500 3" stroke="#000" stroke-width="1.300" fill="none"/><path d="M17.500 9.500h4M17.500 12.500h4" stroke="#000" stroke-width="1.200"/></svg><svg style="left:533px;top:9px" width="24" height="24" viewBox="0 0 24 24"><path d="M3 5c1-1 2-1 3 0l4 3 6-3c2-1 3 0 2 1l-4 5 4 3c3 2 4 4 3 5-1 0-3-1-5-2l-5-2-2 4c-1 1-2 1-2 0l0-5-4-3c-1-1 0-2 1-2l3 0z" fill="#40e0f0" stroke="#1040c0" stroke-width="1"/><path d="M5 6l6 5 7 5" stroke="#c8f8ff" stroke-width="1.200" fill="none"/></svg><svg style="left:560px;top:9px" width="24" height="24" viewBox="0 0 24 24"><rect x="2.500" y="3.500" width="19" height="17" fill="#ffffa0" stroke="#30c8d8" stroke-width="1.400"/><path d="M12 5v14M4.500 12h15" stroke="#000" stroke-width="1.200"/><path d="M12 4.500l-2.500 3h5zM12 19.500l-2.500-3h5zM4 12l3-2.500v5zM20 12l-3-2.500v5z" fill="#000"/></svg><svg style="left:588px;top:9px" width="24" height="24" viewBox="0 0 24 24"><path d="M12 3v18M3 12h18" stroke="#101070" stroke-width="2"/><path d="M12 1.500l-4 4.500h8zM12 22.500l-4-4.500h8zM1.500 12l4.500-4v8zM22.500 12l-4.500-4v8z" fill="#101070"/><path d="M12 3.500l-2.500 2.500M3.500 12l2.500-2.500" stroke="#40d8e8" stroke-width="1"/><circle cx="12" cy="12" r="2" fill="#30a0b0"/></svg><svg style="left:617px;top:9px" width="24" height="24" viewBox="0 0 24 24"><path d="M2 8h4v9h-4z" fill="#2060d8" stroke="#102080" stroke-width=".8"/><path d="M6 9c2-3 6-4 9-3l5 2c2 1 2 3 0 3l-6-1" fill="#f8c8a8" stroke="#000" stroke-width="1"/><path d="M6 16c3 1 5 1 7-1l7-3c1-2-1-3-3-2l-5 1" fill="#f8c8a8" stroke="#000" stroke-width="1"/><ellipse cx="14.500" cy="16" rx="5" ry="4" fill="#50b8f0" stroke="#1040a0" stroke-width="1"/><path d="M11 15c1-2 4-2 6-1" stroke="#c8f0ff" stroke-width="1" fill="none"/><path d="M13 19l4-5" stroke="#1040a0" stroke-width="1" stroke-dasharray="1 1"/></svg><svg style="left:645px;top:9px" width="24" height="24" viewBox="0 0 24 24"><path d="M13 13l8 8" stroke="#104080" stroke-width="3.400" stroke-linecap="round"/><path d="M13 13l8 8" stroke="#40d0e8" stroke-width="1.400" stroke-linecap="round"/><circle cx="8.500" cy="8.500" r="6" fill="#fff" stroke="#103878" stroke-width="1.600"/><path d="M5.500 8.500h6M8.500 5.500v6" stroke="#000" stroke-width="2"/></svg><svg style="left:673px;top:9px" width="24" height="24" viewBox="0 0 24 24"><path d="M13 13l8 8" stroke="#104080" stroke-width="3.400" stroke-linecap="round"/><path d="M13 13l8 8" stroke="#40d0e8" stroke-width="1.400" stroke-linecap="round"/><circle cx="8.500" cy="8.500" r="6" fill="#fff" stroke="#103878" stroke-width="1.600"/><path d="M5.500 8.500h6" stroke="#000" stroke-width="2"/></svg><svg style="left:701px;top:9px" width="24" height="24" viewBox="0 0 24 24"><path d="M2 20l8-6h12l-8 6z" fill="#40c8d0" stroke="#106878" stroke-width="1"/><path d="M4 19.500l7-5M8 19.500l7-5M12 19.500l7-5" stroke="#208898" stroke-width=".6"/><path d="M12 16v-11" stroke="#e00000" stroke-width="1.200" stroke-dasharray="1.500 1"/><path d="M12 16v-11" stroke="#ffe000" stroke-width="1.200" stroke-dasharray="1 1.500" stroke-dashoffset="1"/><path d="M8 7l4-5 4 5" stroke="#1030e0" stroke-width="1.200" fill="none"/></svg><svg style="left:728px;top:9px" width="24" height="24" viewBox="0 0 24 24"><rect x="4" y="5" width="17" height="17" fill="#707080"/><rect x="2.500" y="3.500" width="16" height="16" fill="#20e8f8" stroke="#1030d0" stroke-width="1.200"/><rect x="11" y="4" width="7" height="7" fill="#c080f0"/><path d="M10.500 3.500v16M2.500 11.500h16" stroke="#1030d0" stroke-width="1.400"/></svg><svg style="left:757px;top:9px" width="24" height="24" viewBox="0 0 24 24"><path d="M2.500 8.500h12v12h-12z" fill="#40e0f8" stroke="#1030d0" stroke-width="1.300"/><path d="M2.500 8.500l6-6h12l-6 6z" fill="#60e8ff" stroke="#1030d0" stroke-width="1.300"/><path d="M14.500 8.500l6-6v12l-6 6z" fill="#28b8d8" stroke="#1030d0" stroke-width="1.300"/></svg><svg style="left:778px;top:31px" width="7" height="4" viewBox="0 0 7 4"><path d="M0 0h7l-3.500 3.500z" fill="#000"/></svg><svg style="left:787px;top:9px" width="24" height="24" viewBox="0 0 24 24"><path d="M4 6v12c0 2 3.500 3.500 8 3.500s8-1.500 8-3.500v-12" fill="#ffe820" stroke="#000" stroke-width="1.200"/><rect x="7" y="8" width="6" height="12" fill="#40e0f0"/><rect x="13" y="8" width="4" height="12" fill="#1030c0"/><path d="M7 8v12M10 8v12M13 8v12" stroke="#103060" stroke-width=".8"/><ellipse cx="12" cy="6" rx="8" ry="3.500" fill="#60d0e8" stroke="#000" stroke-width="1.200"/><ellipse cx="12" cy="6" rx="6" ry="2" fill="none" stroke="#ffe820" stroke-width="1.200"/></svg><svg style="left:807.5px;top:31px" width="7" height="4" viewBox="0 0 7 4"><path d="M0 0h7l-3.500 3.500z" fill="#000"/></svg><svg style="left:817px;top:9px" width="24" height="24" viewBox="0 0 24 24"><rect x="2.500" y="3.500" width="18" height="17" fill="#40e0f8" stroke="#1030a0" stroke-width="1.200"/><path d="M8 8l5-3h6l-5 3z" fill="#ffffb0" stroke="#806000" stroke-width=".8"/><path d="M8 8h6v3h-6zM14 8l5-3v3l-5 3z" fill="#f0e070" stroke="#806000" stroke-width=".8"/><path d="M4 14l5-3h6l-5 3z" fill="#fff" stroke="#000" stroke-width=".8"/><path d="M4 14h6v4h-6z" fill="#ffe860" stroke="#000" stroke-width=".8"/><path d="M10 14l5-3v4l-5 3z" fill="#30a0b0" stroke="#000" stroke-width=".8"/></svg><svg style="left:845px;top:9px" width="24" height="24" viewBox="0 0 24 24"><rect x="2.500" y="3.500" width="18" height="17" fill="#40e0f8" stroke="#1030a0" stroke-width="1.200"/><path d="M5 14l5-3h6l-5 3z" fill="#fff" stroke="#000" stroke-width=".8"/><path d="M5 14h6v4h-6z" fill="#ffe860" stroke="#000" stroke-width=".8"/><path d="M11 14l5-3v4l-5 3z" fill="#30a0b0" stroke="#000" stroke-width=".8"/></svg><svg style="left:911px;top:9px" width="24" height="24" viewBox="0 0 24 24"><circle cx="4.500" cy="5" r="3" fill="#30b0d0" stroke="#104060" stroke-width=".8"/><circle cx="3.500" cy="4" r="1" fill="#c0f0ff"/><path d="M9 3c5-1 9 2 9 7" stroke="#1030e0" stroke-width="1.400" fill="none" stroke-dasharray="2.500 1.200"/><path d="M9 3c5-1 9 2 9 7" stroke="#ffe000" stroke-width="1.400" fill="none" stroke-dasharray="1.200 2.500" stroke-dashoffset="1.200"/><path d="M15 8l3 4 2.500-4.500z" fill="#1030e0"/><path d="M3.500 15.500l4-3h13l-4 3z" fill="#e8e8f0" stroke="#000" stroke-width="1"/><path d="M3.500 15.500h13v5h-13zM16.500 15.500l4-3v5l-4 3z" fill="#fff" stroke="#000" stroke-width="1"/><path d="M6 18h8" stroke="#808080" stroke-width=".8"/></svg><svg style="left:957px;top:9px" width="24" height="24" viewBox="0 0 24 24"><path d="M3 5.500h18" stroke="#1030e0" stroke-width="1.300"/><path d="M6.500 2l-4 3.500 4 3.500M17.500 2l4 3.500-4 3.500" stroke="#1030e0" stroke-width="1.300" fill="none"/><rect x="2" y="13" width="20" height="6" fill="#f8c8a8" stroke="#805030" stroke-width=".6"/><path d="M2 20h20" stroke="#30d0e8" stroke-width="1.600"/><path d="M4 13v3M6 13v2M8 13v3M10 13v2M12 13v3M14 13v2M16 13v3M18 13v2M20 13v3" stroke="#a03020" stroke-width=".8"/></svg><svg style="left:986px;top:9px" width="24" height="24" viewBox="0 0 24 24"><path d="M8 2.500h11v17h-4v-13h-7z" fill="#505050" stroke="#000" stroke-width="1"/><path d="M5 15h14v3h-14z" fill="#404040" stroke="#000" stroke-width=".8"/><path d="M13 18v4h4v-4" fill="#606060" stroke="#000" stroke-width=".8"/><circle cx="7" cy="10" r="4.200" fill="#30a8e0" stroke="#1030c0" stroke-width="1"/><path d="M4.500 9c1-2 3-2.500 5-1.500" stroke="#ffe860" stroke-width="1.400" fill="none"/><circle cx="5.500" cy="8.500" r="1" fill="#d0f8ff"/></svg><svg style="left:1014px;top:9px" width="24" height="24" viewBox="0 0 24 24"><path d="M9.500 7v-3c0-1 1-2 2.500-2s2.500 1 2.500 2v3" stroke="#000" stroke-width="1.600" fill="none"/><path d="M7 9c0-1.500 2-2.500 5-2.500s5 1 5 2.500v10c0 1.500-2 2.500-5 2.500s-5-1-5-2.500z" fill="#c0a020" stroke="#403000" stroke-width="1"/><path d="M8.500 9v11" stroke="#f0e070" stroke-width="1.500"/><path d="M15 9v12" stroke="#806810" stroke-width="2"/></svg><svg style="left:1061px;top:9px" width="24" height="24" viewBox="0 0 24 24"><path d="M2.500 7.500h4l1-2h8l1 2h5v11h-19z" fill="#303030" stroke="#000" stroke-width="1"/><rect x="9" y="4" width="5" height="2" fill="#f0d020"/><path d="M3 9h18" stroke="#808080" stroke-width=".8"/><circle cx="12" cy="13.500" r="4.500" fill="#e8e8f0" stroke="#000" stroke-width="1"/><circle cx="12" cy="13.500" r="2.800" fill="#101020"/><circle cx="11" cy="12.500" r="1" fill="#fff"/><path d="M3 17h4" stroke="#e8d020" stroke-width="1.200"/><rect x="17.500" y="10" width="2.500" height="1.500" fill="#2040e0"/></svg><svg style="left:1108px;top:9px" width="24" height="24" viewBox="0 0 24 24"><path d="M12 2.500c5.500 0 9.500 4 9.500 9.500s-4 9.500-9.500 9.500-9.500-4-9.500-9.500c0-4 3-6.500 6.500-6.500s6 2.500 6 5.500-2 5-4.500 5-3.500-1.500-3.500-3.500" stroke="#a8a8b8" stroke-width="2.600" fill="none"/><path d="M13 3c5 0 9 4 9 9.500s-4 9.500-9.500 9.500" stroke="#f0f0f8" stroke-width="1" fill="none"/></svg><svg style="left:1136px;top:9px" width="24" height="24" viewBox="0 0 24 24"><circle cx="11" cy="12" r="9" fill="#101060"/><path d="M4 9c2-5 9-7 14-3" stroke="#fff" stroke-width="2" fill="none"/><path d="M17 5c3 3 3.500 8 1 12" stroke="#ffffa0" stroke-width="2" fill="none"/><path d="M5 16c2 3 6 5 10 4" stroke="#40d0e0" stroke-width="1.500" fill="none"/><path d="M10 5.500c0-1 2-1 2 0v6l1-2c.5-1 2-.5 2 .5v1c.5-1 2-.5 2 .5v1c.5-.8 1.800-.4 1.800.5v4c0 3-1.500 5-4 5h-2c-2 0-3-1-4-3l-2.500-4c-.5-1 1-2 2-1l1.700 2z" fill="#fff" stroke="#000" stroke-width="1"/></svg><svg style="left:1164px;top:9px" width="24" height="24" viewBox="0 0 24 24"><path d="M10 14v-12M10 14l11-1M10 14l-7 7" stroke="#101070" stroke-width="1.400" fill="none"/><path d="M10 0l-2.500 4h5zM23 13l-4-2.500v5zM2 22l1-4.500 3 3z" fill="#101070"/><path d="M10 14l-7 7" stroke="#e8c800" stroke-width="1.200" stroke-dasharray="0 2 8 0"/><path d="M10 14l-6 6" stroke="#e8c800" stroke-width="1.100"/></svg><svg style="left:1191px;top:9px" width="24" height="24" viewBox="0 0 24 24"><rect x="1" y="2" width="19" height="19" fill="none" stroke="#fff" stroke-width="1.400" stroke-dasharray="1.500 1.500"/><g fill="#40e8f8" stroke="#1030e0" stroke-width="1"><rect x="5.500" y="3.500" width="5" height="2.500"/><rect x="10.500" y="8" width="5" height="2.500"/><rect x="16.500" y="7" width="5" height="2.500"/><rect x="2.500" y="12" width="5" height="2.500"/><rect x="10.500" y="13" width="5" height="2.500"/><rect x="16.500" y="12.500" width="5" height="2.500"/><rect x="15.500" y="17.500" width="5" height="2.500"/></g></svg><svg style="left:1220px;top:9px" width="24" height="24" viewBox="0 0 24 24"><path d="M4 2v20M8.700 2v20M13.400 2v20M18 2v20" stroke="#1030e0" stroke-width="1.300"/><path d="M1 5h20M1 9.700h20M1 14.400h20M1 19h20" stroke="#1030e0" stroke-width="1.300" stroke-dasharray="2.300 1"/><path d="M1 5h20M1 9.700h20M1 14.400h20M1 19h20" stroke="#30c8d8" stroke-width="1.300" stroke-dasharray="1 2.300" stroke-dashoffset="1"/></svg><svg style="left:1240.5px;top:31px" width="7" height="4" viewBox="0 0 7 4"><path d="M0 0h7l-3.500 3.500z" fill="#000"/></svg><svg style="left:1250px;top:9px" width="24" height="24" viewBox="0 0 24 24"><path d="M4.500 6.500l3-4h11l-3 4z" fill="#d0f4f8" stroke="#000" stroke-width="1"/><path d="M4.500 6.500h11v14h-11z" fill="#40e0f8" stroke="#000" stroke-width="1"/><path d="M15.500 6.500l3-4v14l-3 4z" fill="#208898" stroke="#000" stroke-width="1"/><path d="M2 13c3 2 14 2 19-3" stroke="#fff" stroke-width="1.200" fill="none"/><path d="M2 9c3 2 14 2 19-3" stroke="#fff" stroke-width="1" fill="none" stroke-dasharray="2 1.500"/></svg><svg style="left:1270px;top:31px" width="7" height="4" viewBox="0 0 7 4"><path d="M0 0h7l-3.500 3.500z" fill="#000"/></svg><svg style="left:1280px;top:9px" width="24" height="24" viewBox="0 0 24 24"><path d="M3.500 8l4-4.500h13l-4 4.500z" fill="#40e0f8" stroke="#000" stroke-width="1.300"/><path d="M3.500 8h13v13h-13z" fill="#40e0f8" stroke="#000" stroke-width="1.300"/><path d="M16.500 8l4-4.500v13l-4 4.500z" fill="#20a8b8" stroke="#000" stroke-width="1.300"/><path d="M7 10v8h8" stroke="#106070" stroke-width="1.200" fill="none"/></svg><svg style="left:1308px;top:9px" width="24" height="24" viewBox="0 0 24 24"><rect x="2.500" y="4.500" width="6" height="3" fill="#c0f8ff" stroke="#1030e0" stroke-width="1.200"/><rect x="15.500" y="14.500" width="6" height="3" fill="#c0f8ff" stroke="#1030e0" stroke-width="1.200"/><path d="M6 8v5h5M13 16h2" stroke="#1030e0" stroke-width="1.200" fill="none"/><path d="M14 7l-6 8 4-1-5 8 9-10-4 1z" fill="#d01010" stroke="#800000" stroke-width=".5"/></svg><svg style="left:1336px;top:9px" width="24" height="24" viewBox="0 0 24 24"><g stroke="#a8a8b8" fill="#e8e8f0" stroke-width="1.200"><path d="M5 10c2-5 8-7 15-6-1 5-6 8-11 8z"/><rect x="3.500" y="11.500" width="8" height="3"/><rect x="12.500" y="17.500" width="8" height="3.500"/><path d="M3 18h8M8 16l3 2-3 2" fill="none"/><path d="M10 7c2-1 4-1 5 0" fill="none"/></g><path d="M6 9c3-4 8-5 14-5" stroke="#fff" stroke-width="1" fill="none"/></svg><svg style="left:1365px;top:9px" width="24" height="24" viewBox="0 0 24 24"><path d="M3 3v18M3 9h6M3 14h7M3 19h4" stroke="#1030e0" stroke-width="1.400" fill="none"/><g fill="#c8f8ff" stroke="#1030e0" stroke-width="1.200"><rect x="2.500" y="2.500" width="7" height="3"/><rect x="9.500" y="7.500" width="6" height="3"/><rect x="16" y="12.500" width="6" height="3"/><rect x="7.500" y="17.500" width="6" height="3"/></g><path d="M15 14h-8" stroke="#000" stroke-width="1.300"/><path d="M6 14l4-3v6z" fill="#000"/></svg><svg style="left:1392px;top:9px" width="24" height="24" viewBox="0 0 24 24"><path d="M8 9c2-5 8-5 11-2 2 3 1 6 2 10l-3 3c-2-4-5-5-7-3l-3 2c0-2-1-4-2-5z" fill="#ffee00" stroke="#202020" stroke-width="1"/><path d="M9 21c2-3 6-3 9 0" stroke="#30b0c0" stroke-width="1.200" fill="none"/><path d="M5 4l4-2 5 3M5 4l-1 5 3 4M3 11l3 2" stroke="#1030e0" stroke-width="1.100" fill="none" stroke-dasharray="1.500 1"/></svg><svg style="left:1413px;top:31px" width="7" height="4" viewBox="0 0 7 4"><path d="M0 0h7l-3.500 3.500z" fill="#000"/></svg><svg style="left:1422px;top:9px" width="24" height="24" viewBox="0 0 24 24"><g fill="#c8f8ff" stroke="#1030e0" stroke-width="1.400"><rect x="8" y="3.500" width="8" height="3"/><rect x="8" y="10.500" width="8" height="3"/><rect x="8" y="17.500" width="8" height="3"/></g></svg><svg style="left:1450px;top:9px" width="24" height="24" viewBox="0 0 24 24"><path d="M2 11l10-8 10 5-10 8z" fill="#fff" stroke="#1030e0" stroke-width="1.400"/><path d="M2 11v4l10 6v-5z" fill="#40d8e8" stroke="#1030e0" stroke-width="1.200"/><path d="M12 16v5l10-8v-5z" fill="#b8ecf4" stroke="#1030e0" stroke-width="1.200"/><path d="M2.500 13l9.500 5.500M12.500 18.500l9.500-8" stroke="#1030e0" stroke-width=".8"/></svg><svg style="left:1470.5px;top:31px" width="7" height="4" viewBox="0 0 7 4"><path d="M0 0h7l-3.500 3.500z" fill="#000"/></svg><svg style="left:1675px;top:9px" width="24" height="24" viewBox="0 0 24 24"><rect x="5" y="7" width="13" height="13" fill="#40e0f0" stroke="#106878" stroke-width="1"/><path d="M5 3.500h13M5 1.500v5M18 1.500v5" stroke="#000" stroke-width="1"/><path d="M5 3.500h13" stroke="#ffe800" stroke-width="1" stroke-dasharray="0 3 7 3"/><path d="M18.500 7.500h5M18.500 20.500h5" stroke="#000" stroke-width="1"/><rect x="19.500" y="8" width="3" height="12" fill="#fff060" stroke="#000" stroke-width=".8"/><rect x="3" y="13" width="10" height="9" fill="#fff" stroke="#000" stroke-width="1"/><rect x="3" y="13" width="10" height="2" fill="#000"/><path d="M4 17h8M4 19h8M4 21h8" stroke="#000" stroke-width=".8"/></svg><svg style="left:1704px;top:9px" width="24" height="24" viewBox="0 0 24 24"><rect x="3.500" y="7.500" width="13" height="13" fill="#40e0f0" stroke="#000" stroke-width="1"/><path d="M4 3.500h13M4 1.500v5M17 1.500v5" stroke="#000" stroke-width="1"/><path d="M6 3.500h9" stroke="#ffe800" stroke-width="1.200"/><path d="M18 7.500h5M18 20.500h5" stroke="#000" stroke-width="1"/><rect x="19" y="8" width="3" height="12" fill="#fff060" stroke="#000" stroke-width=".8"/><path d="M5 9l11 10M5 13l7 6M9 8l7 7" stroke="#a0f0f8" stroke-width=".7"/></svg><svg style="left:1752px;top:9px" width="24" height="24" viewBox="0 0 24 24"><text x="7" y="10" font-size="9.500" font-family="Liberation Sans,sans-serif" fill="#101070" textLength="14" lengthAdjust="spacingAndGlyphs">ABC</text><path d="M7 12h14" stroke="#101070" stroke-width="1"/><path d="M10 12l-7 6" stroke="#101070" stroke-width="1"/><path d="M2 19.500l1-4.500 3 3z" fill="#101070"/></svg><svg style="left:1772px;top:31px" width="7" height="4" viewBox="0 0 7 4"><path d="M0 0h7l-3.500 3.500z" fill="#000"/></svg><svg style="left:1800px;top:9px" width="24" height="24" viewBox="0 0 24 24"><path d="M3 8l10-5v13l-10 5z" fill="#b8b8c8" stroke="#8888a0" stroke-width=".8"/><path d="M13 3l8 3v12l-8-2z" fill="#c8c8d8" stroke="#8888a0" stroke-width=".8"/><path d="M9 7l8-3v10l-8 4z" fill="#c89098" stroke="#d01010" stroke-width="1.200"/><path d="M7 9v9l5 3 4-5" stroke="#1030e0" stroke-width="2.800" fill="none"/><path d="M7 9v9l5 3 4-5" stroke="#40b0ff" stroke-width="1.200" fill="none"/><path d="M7 6l-3 4h6zM18 14l-4 .5 2.500 3zM12 23l-3-2.500 4-1z" fill="#1030e0"/></svg><svg style="left:1821px;top:31px" width="7" height="4" viewBox="0 0 7 4"><path d="M0 0h7l-3.500 3.500z" fill="#000"/></svg><div class="abs" style="left:1479px;top:9px;width:178px;height:24px;background:#e1e1e1;border:1px solid #c4c4cc"><div class="abs" style="left:4px;top:3px;font-size:14px">brep_2</div></div><svg style="left:1642px;top:19px" width="10" height="7" viewBox="0 0 10 7"><path d="M1 1l4 4 4-4" stroke="#444" stroke-width="1.100" fill="none"/></svg><div class="abs" style="left:881px;top:5px;width:3px;height:2px;background:#f6f6fb;border-right:1px solid #8c8ca4;border-bottom:1px solid #8c8ca4"></div><div class="abs" style="left:1804px;top:0;width:116px;height:9px;background:linear-gradient(90deg,rgba(207,207,230,0),rgba(207,207,230,.9) 55%,#cfcfe6)"></div><svg style="left:1870px;top:2px" width="46" height="34" viewBox="0 0 46 34"><path d="M13 1.500c4-1.500 8.500 0 8.500 3s-3 4-6.500 4" stroke="#d01030" stroke-width="1.500" fill="none"/><path d="M25.500 8.500c-4.500 .5-6 3-3.500 5.500s3.500 4.500-.5 6.500" stroke="#f0a010" stroke-width="1.700" fill="none"/><path d="M10 9.500l-4.500 13c5 0 8.800-3 8.800-7.500 0-3.500-2-5.500-4.300-5.500z" stroke="#5030a0" stroke-width="1.500" fill="none"/><text x="11" y="28.500" font-size="8.300" font-weight="bold" font-style="italic" font-family="Liberation Sans,sans-serif" fill="#4828a0" textLength="30.500" lengthAdjust="spacingAndGlyphs">CATIA</text></svg>
</div>
<div id="sb" class="abs"><div class="abs t">用新名称保存活动文档</div>
<div class="abs" style="left:1552px;top:1px;width:299px;height:21px;background:#fff;border:1px solid #9a9ab0;border-right-color:#eee;border-bottom-color:#eee"></div>
<div class="abs" style="left:1853px;top:1px;width:32px;height:21px;border:1px solid #f6f6fb;border-right-color:#8c8ca4;border-bottom-color:#8c8ca4"></div>
<div class="abs" style="left:1887px;top:1px;width:32px;height:21px;border:1px solid #f6f6fb;border-right-color:#8c8ca4;border-bottom-color:#8c8ca4"></div>
<svg style="left:1853px;top:1px" width="66" height="21" viewBox="0 0 66 21"><g fill="none" stroke="#a4a4b8" stroke-width="1.300"><rect x="11.500" y="4.500" width="7" height="6"/><path d="M9 14h13v-9M20 12h-2"/><circle cx="48" cy="9" r="4.500"/><path d="M43 16h10l-2-3M48 7v4"/></g><g fill="none" stroke="#fff" stroke-width="1" transform="translate(1,1)"><path d="M9 14h13v-9"/><path d="M43 16h10"/></g></svg>
</div>
<div id="task" class="abs">
<svg style="left:16px;top:11px" width="17" height="17" viewBox="0 0 17 17"><path d="M0 2.400l6.800-1v6.300h-6.800zM7.800 1.300l9.200-1.300v7.700h-9.200zM0 8.700h6.800v6.300l-6.800-1zM7.800 8.700h9.200v7.700l-9.200-1.300z" fill="#fff"/></svg><svg style="left:66px;top:9px" width="18" height="22" viewBox="0 0 18 22"><rect x="0" y="0" width="18" height="22" fill="#fff"/><rect x="2.500" y="2.500" width="13" height="4" fill="#060606"/><rect x="2.5" y="9.0" width="2.200" height="1.900" fill="#060606"/><rect x="2.5" y="12.2" width="2.200" height="1.900" fill="#060606"/><rect x="2.5" y="15.4" width="2.200" height="1.900" fill="#060606"/><rect x="2.5" y="18.6" width="2.200" height="1.900" fill="#060606"/><rect x="6.1" y="9.0" width="2.200" height="1.900" fill="#060606"/><rect x="6.1" y="12.2" width="2.200" height="1.900" fill="#060606"/><rect x="6.1" y="15.4" width="2.200" height="1.900" fill="#060606"/><rect x="6.1" y="18.6" width="2.200" height="1.900" fill="#060606"/><rect x="9.7" y="9.0" width="2.200" height="1.900" fill="#060606"/><rect x="9.7" y="12.2" width="2.200" height="1.900" fill="#060606"/><rect x="9.7" y="15.4" width="2.200" height="1.900" fill="#060606"/><rect x="9.7" y="18.6" width="2.200" height="1.900" fill="#060606"/><rect x="13.3" y="9.0" width="2.200" height="1.900" fill="#060606"/><rect x="13.3" y="12.2" width="2.200" height="1.900" fill="#060606"/><rect x="13.3" y="15.4" width="2.200" height="1.900" fill="#060606"/><rect x="13.3" y="18.6" width="2.200" height="1.900" fill="#060606"/></svg><svg style="left:112px;top:9px" width="26" height="24" viewBox="0 0 26 24"><ellipse cx="12" cy="10" rx="11" ry="8" fill="#f4f4f4" stroke="#c8c8d0" stroke-width="1" transform="rotate(-18 12 10)"/><ellipse cx="12" cy="10" rx="9.500" ry="6.500" fill="none" stroke="#d03030" stroke-width="1.300" transform="rotate(-18 12 10)"/><path d="M9 6l9 10M17 5l-6 11" stroke="#c0c0c8" stroke-width="1.600"/><circle cx="10" cy="19" r="2.800" fill="none" stroke="#2080e0" stroke-width="1.800"/><circle cx="19.500" cy="18" r="2.800" fill="none" stroke="#2080e0" stroke-width="1.800"/></svg><div class="abs tk" style="left:153px;width:152px"><span class="lb">照片</span><div class="ul"></div></div><svg style="left:162px;top:10px" width="16" height="20" viewBox="0 0 16 20"><path d="M1 1h6l2 2v16h-8z" fill="#e8b84a"/><path d="M3 3h11v16h-11z" fill="#ffe08a"/><path d="M3 3h11v2h-11z" fill="#fff0b8"/><path d="M1 19h13" stroke="#d8a030" stroke-width="1"/></svg><div class="abs tk" style="left:313px;width:152px"><span class="lb">3维</span><div class="ul"></div></div><svg style="left:322px;top:10px" width="16" height="20" viewBox="0 0 16 20"><path d="M1 1h6l2 2v16h-8z" fill="#e8b84a"/><path d="M3 3h11v16h-11z" fill="#ffe08a"/><path d="M3 3h11v2h-11z" fill="#fff0b8"/><path d="M1 19h13" stroke="#d8a030" stroke-width="1"/></svg><div class="abs tk" style="left:473px;width:152px"><span class="lb">屏幕截图</span><div class="ul"></div></div><svg style="left:482px;top:10px" width="16" height="20" viewBox="0 0 16 20"><path d="M1 1h6l2 2v16h-8z" fill="#e8b84a"/><path d="M3 3h11v16h-11z" fill="#ffe08a"/><path d="M3 3h11v2h-11z" fill="#fff0b8"/><path d="M1 19h13" stroke="#d8a030" stroke-width="1"/></svg><div class="abs tk" style="left:633px;width:152px"><span class="lb">368sp--0527 - Po...</span><div class="ul"></div></div><svg style="left:640px;top:9px" width="24" height="22" viewBox="0 0 24 22"><rect x="8" y="2" width="15" height="18" fill="#f0d8d0"/><path d="M12 6h9M12 10h9M12 14h9" stroke="#d04020" stroke-width="1.600"/><path d="M0 2.500l14-2.500v22l-14-2.500z" fill="#d04423"/><path d="M4.500 16v-10h3.500c2 0 3.200 1.200 3.200 3s-1.200 3-3.200 3h-1.500" stroke="#fff" stroke-width="1.800" fill="none"/></svg><div class="abs tk" style="left:794px;width:152px"><span class="lb">RH202104003注...</span><div class="ul"></div></div><svg style="left:801px;top:9px" width="24" height="22" viewBox="0 0 24 22"><rect x="8" y="2" width="15" height="18" fill="#fff"/><path d="M12 6h9M12 9h9M12 12h9M12 15h9" stroke="#2b579a" stroke-width="1.400"/><path d="M0 2.500l14-2.500v22l-14-2.500z" fill="#2b579a"/><path d="M3 7l1.800 8 2.200-7 2.200 7 1.800-8" stroke="#fff" stroke-width="1.500" fill="none"/></svg><div class="abs tk" style="left:955px;width:152px"><span class="lb">170M8Ⅱ--527 (1...</span><div class="ul"></div></div><svg style="left:961px;top:8px" width="26" height="25" viewBox="0 0 26 25"><rect width="26" height="25" fill="#181818"/><path d="M2 20c2-6 5-8 8-8l3-7 2 5 4 1c3 2 4 6 3 11l-5 0-2-4-5 3z" fill="#e8e8e8"/><path d="M4 12l4-8 1 6M14 14l4 6" stroke="#fff" stroke-width="1" fill="none"/><text x="18" y="10" font-size="10" fill="#fff" font-family="Liberation Sans,sans-serif">6</text></svg><div class="abs tk" style="left:1115px;width:152px"><span class="lb">无标题 - Autodes...</span><div class="ul"></div></div><svg style="left:1122px;top:8px" width="24" height="25" viewBox="0 0 24 25"><rect width="24" height="25" fill="#b8f0f0"/><path d="M0 0h24v6l-24 10z" fill="#e8ffff"/><path d="M7 6c1-2 3-3 5.500-3 3 0 5 1.500 5 4 0 2-1.200 3-3 3.500 2 .5 3.500 1.800 3.500 4 0 3-2.500 4.500-5.500 4.500s-5-1.500-6-3.500" stroke="#0a8a90" stroke-width="3" fill="none"/><text x="7" y="24" font-size="5" fill="#0a8a90" font-weight="bold" font-family="Liberation Sans,sans-serif">MAX</text></svg><div class="abs tk" style="left:1274px;width:160px;background:#3e3e3e"><span class="lb" style="left:37px">CATIA V5 - [vvv.st...</span><div class="ul"></div></div><div class="abs" style="left:1283px;top:9px;width:26px;height:23px;background:#e8e8e8"></div><svg style="left:1284px;top:10px" width="24" height="21" viewBox="0 0 20 18" preserveAspectRatio="none"><defs><radialGradient id="lgb3" cx=".62" cy=".38" r=".42"><stop offset="0" stop-color="#fff"/><stop offset=".18" stop-color="#ffe27a"/><stop offset=".45" stop-color="#ff9a18"/><stop offset=".75" stop-color="#b04008"/><stop offset="1" stop-color="#000" stop-opacity="0"/></radialGradient><linearGradient id="lgs3" x1="0" y1="0" x2="1" y2="1"><stop offset="0" stop-color="#1a5ad8"/><stop offset=".55" stop-color="#38b4ff"/><stop offset="1" stop-color="#1a78e0"/></linearGradient><filter id="lgf3" x="-10%" y="-10%" width="120%" height="120%"><feGaussianBlur stdDeviation=".55"/></filter><clipPath id="lgc3"><rect width="20" height="18"/></clipPath></defs><rect width="20" height="18" fill="#000"/><g clip-path="url(#lgc3)"><g filter="url(#lgf3)"><rect width="20" height="18" fill="url(#lgb3)"/><path d="M0 1l2-1.500 9.500 9 2.500 5 .5 5h-4l-1.500-6.500-9-8.500z" fill="url(#lgs3)"/><path d="M1.500 1.500l9 8.500 2 8" stroke="#7fd4ff" stroke-width=".9" fill="none" opacity=".8"/><circle cx="11.300" cy="9.500" r="1.600" fill="#fff" opacity=".9"/></g></g></svg><svg style="left:1669px;top:15px" width="14" height="9" viewBox="0 0 14 9"><path d="M1.500 7.500l5.500-5.500 5.500 5.500" stroke="#fff" stroke-width="1.400" fill="none"/></svg><svg style="left:1692px;top:13px" width="14" height="14" viewBox="0 0 14 14"><rect width="14" height="14" rx="2.500" fill="#f07018"/><text x="1.800" y="11" font-size="10.500" fill="#fff" font-family="Liberation Sans,sans-serif">通</text></svg><svg style="left:1716px;top:12px" width="18" height="16" viewBox="0 0 18 16"><path d="M1 5.500h3l4-3.500v12l-4-3.500h-3z" fill="none" stroke="#fff" stroke-width="1.100"/><path d="M10.500 5.500c1 1.500 1 3.500 0 5M12.800 3.500c2 3 2 6 0 9M15 2c2.600 4 2.600 8 0 12" stroke="#fff" stroke-width="1.100" fill="none"/></svg><div class="abs" style="left:1740px;top:12px;font-size:13px;color:#c4c4c4">英</div><svg style="left:1768px;top:13px" width="15" height="14" viewBox="0 0 15 14"><rect width="15" height="14" rx="2" fill="#f04a10"/><path d="M11.500 3.800c-2-1-6-1.200-7 .5-1.200 2.200 6.500 2.200 6.500 5.200 0 2-4.500 2.200-7.500 .8" stroke="#fff" stroke-width="1.900" fill="none"/></svg><div class="abs" style="left:1790px;top:3px;width:80px;text-align:center;font-size:12.300px;line-height:19px;color:#fff">13:51<br>2021/5/27</div><svg style="left:1879px;top:10px" width="28" height="24" viewBox="0 0 28 24"><path d="M1.500 2.500h15v11h-8l-3 3v-3h-4z" fill="#fff"/><path d="M4 5.500h10M4 8h10M4 10.500h6" stroke="#060606" stroke-width="1"/><circle cx="16" cy="15.500" r="6.800" fill="#2c2c2c" stroke="#d8d8d8" stroke-width="1.100"/><text x="12.800" y="19.800" font-size="11.500" font-weight="bold" fill="#fff" font-family="Liberation Sans,sans-serif">1</text></svg><div class="abs" style="left:1915px;top:0;width:1px;height:40px;background:#5a5a5a"></div>
</div>
<div id="menu" class="abs">
<div class="mn abs" style="top:2px"><span class="l">新建...</span><span class="k">Ctrl+N</span></div><svg style="left:3px;top:3px" width="22" height="22" viewBox="0 0 22 22"><defs><pattern id="nchk" width="2" height="2" patternUnits="userSpaceOnUse"><rect width="2" height="2" fill="#fff"/><rect width="1" height="1" fill="#ffff9c"/><rect x="1" y="1" width="1" height="1" fill="#ffff9c"/></pattern></defs><path d="M3.500 3.500h11l4 4v13h-15z" fill="url(#nchk)"/><path d="M3.500 3.500h11l4 4v13h-15.500" fill="none" stroke="#000" stroke-width="1.100"/><path d="M3.500 3.500v17" stroke="#c8c8c8" stroke-width=".8"/><path d="M14.500 3.500v4h4" fill="#fff" stroke="#000" stroke-width="1"/></svg><div class="mn abs" style="top:26px"><span class="l">新建自...</span></div><svg style="left:3px;top:27px" width="22" height="22" viewBox="0 0 22 22"><path d="M9.500 2.500h7l3 3v12h-10z" fill="#e8fbff" stroke="#18a0a8" stroke-width="1.200"/><path d="M1.500 20.500l3-7.500h13l-3 7.500z" fill="#ffd8a0" stroke="#201000" stroke-width="1"/><path d="M1.500 20.500v-8l2.500 1.500" fill="#a00010" stroke="#600" stroke-width=".6"/><path d="M3 13c2-4.500 6-6.500 10-6.500v-2.500l5 4.500-5 4v-2.500c-3 0-6 .5-10 3z" fill="#fff" stroke="#1030e0" stroke-width="1.200"/><circle cx="3.800" cy="3.800" r="2.200" fill="#fff000"/><path d="M3.800 0v7.600M0 3.800h7.600M1.100 1.100l5.400 5.400M6.500 1.100l-5.400 5.400" stroke="#e01010" stroke-width=".9"/><circle cx="3.800" cy="3.800" r="1.500" fill="#fff000"/></svg><div class="mn abs" style="top:50px"><span class="l">打开...</span><span class="k">Ctrl+O</span></div><svg style="left:3px;top:51px" width="22" height="22" viewBox="0 0 22 22"><path d="M.5 7.500l1.500-2h5l2 2h7v3h-13l-2.500 6z" fill="#b8a020" stroke="#403000" stroke-width="1"/><path d="M.5 18.500l4-8h14l-4 8z" fill="#ffd820" stroke="#000" stroke-width="1"/><path d="M5.500 12h11" stroke="#fff8a0" stroke-width="1.200"/><path d="M12 4c2-2 5-2 6.500 0" stroke="#000" stroke-width="1" fill="none"/><path d="M19.500 2v3.500h-3.500z" fill="#000"/></svg><div class="mn abs" style="top:74px"><span class="l">关闭</span></div><div class="abs sep" style="top:101px"></div><div class="mn abs" style="top:107px"><span class="l">保存</span><span class="k">Ctrl+S</span></div><svg style="left:3px;top:108px" width="22" height="22" viewBox="0 0 22 22"><rect x="1.500" y="1.500" width="19" height="19" rx="1.500" fill="#1a1a10" stroke="#000"/><rect x="2" y="2.500" width="3.500" height="17" fill="#d8d020"/><rect x="16.500" y="2.500" width="3.500" height="17" fill="#d8d020"/><rect x="5.500" y="2" width="11" height="9" fill="#fff"/><path d="M6.500 4.500h9M6.500 6.500h9M6.500 8.500h9" stroke="#3a6ae8" stroke-width="1"/><rect x="5.500" y="13" width="11" height="7" fill="#d0d040"/><rect x="6.500" y="14" width="6" height="6" fill="#000"/><rect x="11" y="15" width="3" height="4" fill="#fff"/></svg><div class="mn abs sel" style="top:131px"><span class="l" style="left:25px">另存为...</span></div><div class="mn abs" style="top:155px"><span class="l">全部保存</span></div><div class="mn abs dis" style="top:179px"><span class="l">保存在 ENOVIA V5 VPM 中...</span></div><svg style="left:3px;top:180px" width="22" height="22" viewBox="0 0 22 22"><g fill="none" stroke="#9a9ab0" stroke-width="1.200"><rect x="2.500" y="3.500" width="16" height="16" rx="2"/><rect x="6" y="4" width="9" height="6"/><rect x="6" y="13" width="9" height="6"/><path d="M1 12h4v8h-4z" fill="#d8d8ea"/></g><g fill="none" stroke="#fff" stroke-width="1" transform="translate(1,1)" opacity=".9"><path d="M18.500 3.500v16h-16"/></g></svg><div class="mn abs" style="top:203px"><span class="l">保存管理...</span></div><div class="abs sep" style="top:230px"></div><div class="mn abs" style="top:236px"><span class="l">打印...</span><span class="k">Ctrl+P</span></div><svg style="left:3px;top:237px" width="22" height="22" viewBox="0 0 22 22"><path d="M6 8l3-7h9l-3 7z" fill="#fff" stroke="#000" stroke-width=".8"/><path d="M9 3h7M8.500 4.500h7M8 6h7" stroke="#2050e0" stroke-width="1"/><path d="M1.500 12l4-4h14l-4 4z" fill="#e8e8a0" stroke="#000" stroke-width=".8"/><path d="M1.500 12h14v7h-14z" fill="#c8c870" stroke="#000" stroke-width=".8"/><path d="M15.500 12l4-4v7l-4 4z" fill="#909040" stroke="#000" stroke-width=".8"/><path d="M3 15h8" stroke="#20a020" stroke-width="1.500"/></svg><div class="mn abs" style="top:260px"><span class="l">打印机设置...</span></div><div class="abs sep" style="top:287px"></div><div class="mn abs" style="top:293px"><span class="l">桌面...</span></div><div class="mn abs" style="top:317px"><span class="l">发送至</span></div><svg style="left:227px;top:325px" width="5" height="8" viewBox="0 0 5 8"><path d="M0 0l4 3.500-4 3.500z" fill="#000"/></svg><div class="mn abs" style="top:341px"><span class="l">文档属性</span></div><svg style="left:3px;top:342px" width="22" height="22" viewBox="0 0 22 22"><rect x="1.500" y="7.500" width="15" height="13" fill="#fff" stroke="#1010a0" stroke-width="1"/><path d="M4 12h3M9 12h5M4 15h3M9 15h5M4 18h3M9 18h5" stroke="#1030e0" stroke-width="1.500"/><path d="M6 9l6-6 6 2-3 5z" fill="#f0c0a0" stroke="#604030" stroke-width=".7"/><rect x="17" y="2" width="4" height="5" fill="#101090"/></svg><div class="abs sep" style="top:368px"></div><div class="mn abs" style="top:374px"><span class="l"><u>1</u> vvv.stp</span></div><div class="abs sep" style="top:401px"></div><div class="mn abs" style="top:407px"><span class="l">退出</span></div>
</div>
</body></html>
